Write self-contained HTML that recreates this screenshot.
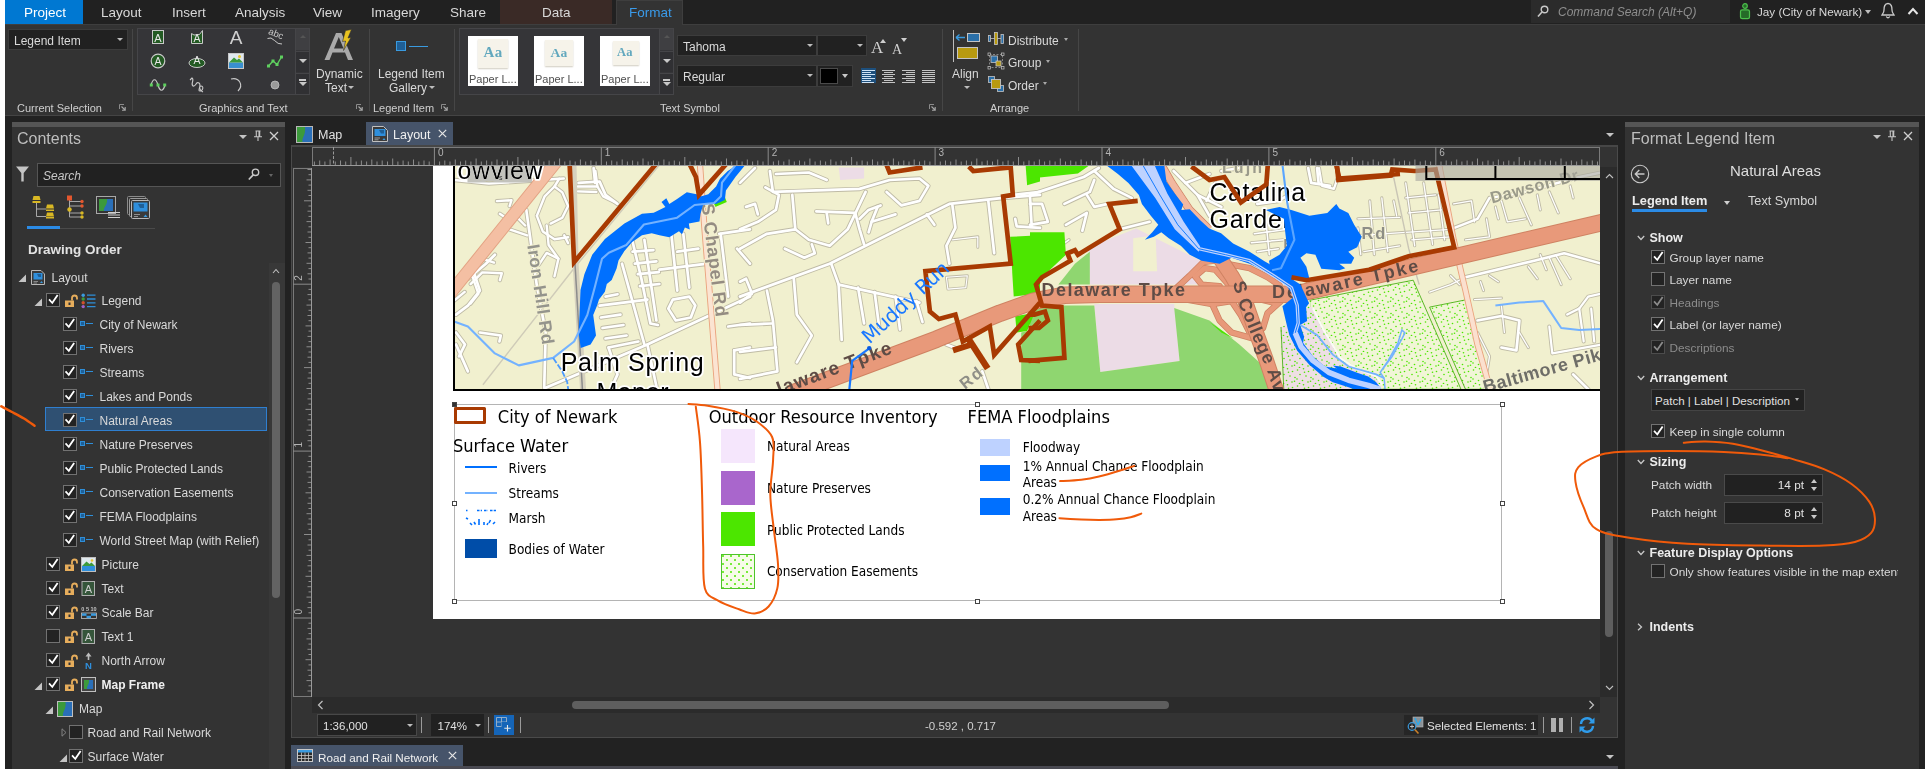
<!DOCTYPE html>
<html lang="en">
<head>
<meta charset="utf-8">
<title>ArcGIS Pro - Layout</title>
<style>
*{box-sizing:border-box;margin:0;padding:0}
html,body{width:1925px;height:769px;overflow:hidden;background:#222222}
body{position:relative;font-family:"Liberation Sans",sans-serif;font-size:12px;color:#d6d6d6;line-height:1}
.a{position:absolute}
.t{position:absolute;white-space:nowrap}
#strip{left:0;top:0;width:5px;height:769px;background:#fff}
/* ---------- tab bar ---------- */
#tabbar{left:5px;top:0;width:1920px;height:24px;background:#212121}
.rt{top:6px;font-size:13.5px;color:#d9d9d9}
/* ---------- ribbon ---------- */
#ribbon{left:5px;top:24px;width:1920px;height:92px;background:#333333;border-top:1px solid #3e3e3e;border-bottom:1px solid #444}
.gl{top:103px;font-size:11px;color:#cfcfcf}
.sep{top:29px;width:1px;height:82px;background:#464646}
.combo{background:#212121;border:1px solid #3c3c3c}
.rtx{margin-top:1px;font-size:12px;color:#d9d9d9}
/* ---------- panels ---------- */
.panel{background:#333333}
.pbar{background:#555;height:5px}
.ptitle{font-size:16px;color:#bebebe}
.row{margin-top:1px;font-size:12px;color:#d9d9d9}
.cb{width:14px;height:14px;margin:-2px 0 0 -1px;background:#232323;border:1px solid #727272}
.cb.on::after{content:"";position:absolute;left:0;top:0;width:12px;height:12px;background:#fff;clip-path:polygon(1.4px 6.6px,2.7px 5.3px,5.1px 7.9px,9.9px 0.9px,11.4px 1.9px,5.4px 10.8px)}
.cb.dis{border-color:#4c4c4c}
.cb.dis.on::after{background:#8a8a8a}
</style>
</head>
<body>
<div id="strip" class="a"></div>
<div id="tabbar" class="a"></div>
<div id="ribbon" class="a"></div>
<div class="a" style="left:5px;top:0;width:78px;height:24px;background:#0078d2"></div>
<div class="a" style="left:500px;top:0;width:112px;height:24px;background:#3a2a26"></div>
<div class="a" style="left:616px;top:0;width:67px;height:25px;background:#333333;border:1px solid #3e3e3e;border-bottom:0"></div>
<div class="t rt" style="left:24px;color:#fff">Project</div>
<div class="t rt" style="left:101px">Layout</div>
<div class="t rt" style="left:172px">Insert</div>
<div class="t rt" style="left:235px">Analysis</div>
<div class="t rt" style="left:313px">View</div>
<div class="t rt" style="left:371px">Imagery</div>
<div class="t rt" style="left:450px">Share</div>
<div class="t rt" style="left:542px">Data</div>
<div class="t rt" style="left:629px;color:#3a9bea">Format</div>
<div class="a" style="left:1531px;top:0;width:199px;height:23px;background:#2b2b2b"></div>
<svg class="a" style="left:1536px;top:4px" width="14" height="14" viewBox="0 0 14 14"><circle cx="8.5" cy="5.5" r="3.3" fill="none" stroke="#c8c8c8" stroke-width="1.4"/><path d="M6 8 L2 12.5" stroke="#c8c8c8" stroke-width="1.6"/></svg>
<div class="t" style="left:1558px;top:6px;font-size:12px;font-style:italic;color:#8e8e8e">Command Search (Alt+Q)</div>
<svg class="a" style="left:1738px;top:2px" width="14" height="18" viewBox="0 0 14 18"><circle cx="7" cy="4" r="2.300" fill="#256b28" stroke="#4cc04c" stroke-width="1.200"/><path d="M2.500 9.500 Q2.500 7.800 4.200 7.800 H9.800 Q11.500 7.800 11.500 9.500 V15 Q11.500 16.700 9.800 16.700 H4.200 Q2.500 16.700 2.500 15 Z" fill="#256b28" stroke="#4cc04c" stroke-width="1.200"/></svg>
<div class="t rt" style="left:1757px;top:6px;font-size:11.700px">Jay (City of Newark)</div>
<div class="a" style="left:1865px;top:10px;border:3px solid transparent;border-top:4px solid #bdbdbd"></div>
<svg class="a" style="left:1880px;top:2px" width="16" height="18" viewBox="0 0 16 18"><path d="M8 1.5 C4.5 1.5 4 5 4 8 C4 11 2.5 12 2 13 H14 C13.500 12 12 11 12 8 C12 5 11.500 1.500 8 1.500 Z" fill="none" stroke="#c8c8c8" stroke-width="1.3"/><path d="M6.300 14.500 Q8 17 9.700 14.500" fill="none" stroke="#c8c8c8" stroke-width="1.3"/></svg>
<svg class="a" style="left:1907px;top:6px" width="12" height="10" viewBox="0 0 12 10"><path d="M1.500 8 L6 3 L10.500 8" fill="none" stroke="#e6e6e6" stroke-width="2"/></svg>
<!--TABS-->
<div class="a combo" style="left:8px;top:29px;width:120px;height:21px"></div>
<div class="t rtx" style="left:14px;top:34px">Legend Item</div>
<div class="a" style="left:117px;top:38px;border:3px solid transparent;border-top:3.5px solid #bdbdbd;border-bottom:0"></div>
<div class="t gl" style="left:17px">Current Selection</div>
<svg class="a" style="left:119px;top:104px" width="7" height="7" viewBox="0 0 7 7"><path d="M0.500 5 V0.500 H5" fill="none" stroke="#8c8c8c" stroke-width="1"/><path d="M2.500 2.500 L6 6 M6.200 3 V6.200 H3" fill="none" stroke="#a8a8a8" stroke-width="1.100"/></svg>
<div class="a sep" style="left:132px"></div>
<div class="a" style="left:137px;top:27.500px;width:173px;height:67.500px;background:#353538;border:1px solid #454548"></div>
<div class="a" style="left:296px;top:29px;width:13px;height:21px;background:#3f3f42"></div>
<div class="a" style="left:296px;top:51px;width:13px;height:21px;background:#303033;border-top:1px solid #454548"></div>
<div class="a" style="left:296px;top:73px;width:13px;height:21px;background:#303033;border-top:1px solid #454548"></div>
<div class="a" style="left:295px;top:29px;width:1px;height:65px;background:#454548"></div>
<div class="a" style="left:300px;top:35px;border:3px solid transparent;border-bottom:3.5px solid #555;border-top:0"></div>
<div class="a" style="left:298.5px;top:59px;border:4px solid transparent;border-top:4.5px solid #c8c8c8;border-bottom:0"></div>
<div class="a" style="left:299px;top:79px;width:7px;height:1.500px;background:#c8c8c8"></div>
<div class="a" style="left:298.5px;top:82px;border:4px solid transparent;border-top:4.5px solid #c8c8c8;border-bottom:0"></div>
<svg class="a" style="left:147.5px;top:27.0px" width="20" height="20" viewBox="0 0 20 20"><rect x="4.500" y="3.500" width="11" height="13" fill="#235a23" stroke="#c9c9c9" stroke-width="1"/><text x="10" y="14.5" font-family="Liberation Sans,sans-serif" font-size="11" font-weight="normal" text-anchor="middle" fill="#e6e6e6">A</text></svg>
<svg class="a" style="left:186.5px;top:27.0px" width="20" height="20" viewBox="0 0 20 20"><path d="M4.500 6.500 L7 8 L12.500 7.500 L15.500 3.500 V16.500 H4.500 Z" fill="#235a23" stroke="#c9c9c9" stroke-width="1"/><text x="10" y="15" font-family="Liberation Sans,sans-serif" font-size="10.5" font-weight="normal" text-anchor="middle" fill="#e6e6e6">A</text></svg>
<svg class="a" style="left:226.0px;top:27.0px" width="20" height="20" viewBox="0 0 20 20"><text x="10" y="17" font-family="Liberation Sans,sans-serif" font-size="19" font-weight="normal" text-anchor="middle" fill="#d0d0d0">A</text></svg>
<svg class="a" style="left:264.5px;top:27.0px" width="20" height="20" viewBox="0 0 20 20"><text x="10.500" y="9.500" font-family="Liberation Sans,sans-serif" font-size="9.500" text-anchor="middle" fill="#c9c9c9" transform="rotate(22 10 8)">abc</text><path d="M2.500 11.500 Q6 9.500 9.500 13.500 T17 17" fill="none" stroke="#c9c9c9" stroke-width="1"/></svg>
<svg class="a" style="left:147.5px;top:51.0px" width="20" height="20" viewBox="0 0 20 20"><circle cx="10" cy="10" r="6.800" fill="#235a23" stroke="#c9c9c9" stroke-width="1.200"/><text x="10" y="14" font-family="Liberation Sans,sans-serif" font-size="10.5" font-weight="normal" text-anchor="middle" fill="#e6e6e6">A</text></svg>
<svg class="a" style="left:186.5px;top:51.0px" width="20" height="20" viewBox="0 0 20 20"><ellipse cx="10" cy="12" rx="8" ry="4.500" fill="#235a23" stroke="#c9c9c9" stroke-width="1"/><text x="10" y="12.5" font-family="Liberation Sans,sans-serif" font-size="10.5" font-weight="normal" text-anchor="middle" fill="#e6e6e6">A</text></svg>
<svg class="a" style="left:226.0px;top:51.0px" width="20" height="20" viewBox="0 0 20 20"><rect x="2.500" y="2.500" width="15" height="15" fill="#3a8fd0" stroke="#c9c9c9" stroke-width="1"/><rect x="3" y="3" width="14" height="8.500" fill="#dfe8ee"/><path d="M3 11.500 L8 6.500 L11 9 L13 7.500 L17 11.500 Z" fill="#3c9a3c"/><circle cx="13.500" cy="5.500" r="1.500" fill="#e8c52a"/></svg>
<svg class="a" style="left:264.5px;top:51.0px" width="20" height="20" viewBox="0 0 20 20"><path d="M3.500 15 L8 10 L12 13.500 L16.500 6" fill="none" stroke="#5fcf5f" stroke-width="1.400"/><g fill="#5fcf5f"><rect x="2" y="13.500" width="3" height="3"/><rect x="6.500" y="8.500" width="3" height="3"/><rect x="10.500" y="12" width="3" height="3"/><rect x="15" y="4.500" width="3" height="3"/></g></svg>
<svg class="a" style="left:147.5px;top:74.5px" width="20" height="20" viewBox="0 0 20 20"><path d="M3 10 C5 3 8 3 10 10 S15 17 17 10" fill="none" stroke="#c9c9c9" stroke-width="1.200"/><g fill="#5fcf5f"><rect x="1.800" y="8.500" width="3" height="3"/><rect x="8.500" y="8.500" width="3" height="3"/><rect x="15.200" y="8.500" width="3" height="3"/></g></svg>
<svg class="a" style="left:186.5px;top:74.5px" width="20" height="20" viewBox="0 0 20 20"><path d="M3 5 L5 3 C8 5 3 9 6 11 C9 12 9 6 12 8 C15 10 10 16 13 16 C16 16 17 11 14 11 C12 11 12 15 16 17" fill="none" stroke="#c9c9c9" stroke-width="1.100"/></svg>
<svg class="a" style="left:226.0px;top:74.5px" width="20" height="20" viewBox="0 0 20 20"><path d="M5 4 C13 2 18 10 12 16" fill="none" stroke="#c9c9c9" stroke-width="1.100"/></svg>
<svg class="a" style="left:264.5px;top:74.5px" width="20" height="20" viewBox="0 0 20 20"><circle cx="10" cy="10" r="4" fill="#9a9a9a" stroke="#c0c0c0" stroke-width="0.800"/></svg>
<div class="t gl" style="left:199px">Graphics and Text</div>
<svg class="a" style="left:356px;top:104px" width="7" height="7" viewBox="0 0 7 7"><path d="M0.500 5 V0.500 H5" fill="none" stroke="#8c8c8c" stroke-width="1"/><path d="M2.500 2.500 L6 6 M6.200 3 V6.200 H3" fill="none" stroke="#a8a8a8" stroke-width="1.100"/></svg>
<svg class="a" style="left:322px;top:29px" width="34" height="34" viewBox="0 0 34 34"><path d="M2.500 31 L14 4 H19.500 L31 31 H26 L23 23.500 H10.500 L7.500 31 Z M12 19.500 H21.500 L16.800 8 Z" fill="#a9a9a9" fill-rule="evenodd"/><path d="M23.500 1.500 L29.500 0.500 L26 9 L29 8.500 L21.500 21.500 L23.500 12 L20.500 12.500 Z" fill="#e9c320" stroke="#333" stroke-width="0.600"/></svg>
<div class="t rtx" style="left:316px;top:67px">Dynamic</div>
<div class="t rtx" style="left:325px;top:81px">Text</div>
<div class="a" style="left:348px;top:86px;border:3px solid transparent;border-top:3.5px solid #bdbdbd;border-bottom:0"></div>
<div class="a sep" style="left:369px"></div>
<div class="a" style="left:396px;top:41px;width:10px;height:10px;background:#1f5f96;border:1.500px solid #3a9be0"></div>
<div class="a" style="left:409px;top:45.500px;width:19px;height:1.500px;background:#3a9be0"></div>
<div class="t rtx" style="left:378px;top:67px">Legend Item</div>
<div class="t rtx" style="left:389px;top:81px">Gallery</div>
<div class="a" style="left:428.5px;top:86px;border:3px solid transparent;border-top:3.5px solid #bdbdbd;border-bottom:0"></div>
<div class="t gl" style="left:373px">Legend Item</div>
<svg class="a" style="left:441px;top:104px" width="7" height="7" viewBox="0 0 7 7"><path d="M0.500 5 V0.500 H5" fill="none" stroke="#8c8c8c" stroke-width="1"/><path d="M2.500 2.500 L6 6 M6.200 3 V6.200 H3" fill="none" stroke="#a8a8a8" stroke-width="1.100"/></svg>
<div class="a sep" style="left:454px"></div>
<div class="a" style="left:459px;top:27.500px;width:215px;height:67.500px;background:#353538;border:1px solid #454548"></div>
<div class="a" style="left:468px;top:36px;width:50px;height:50px;background:#fff"></div>
<div class="a" style="left:478px;top:39px;width:30px;height:29px;background:#f6f3ea;box-shadow:0 1px 1.500px #d0ccc0"></div>
<div class="t" style="left:468px;top:45.0px;width:50px;text-align:center;font-family:'Liberation Serif',serif;font-weight:bold;font-size:15px;letter-spacing:0.300px;color:#62a8be">Aa</div>
<div class="t" style="left:469px;top:74px;font-size:11px;color:#4f4f4f">Paper L...</div>
<div class="a" style="left:534px;top:36px;width:50px;height:50px;background:#fff"></div>
<div class="a" style="left:545px;top:40px;width:28px;height:26px;background:#f6f3ea;box-shadow:0 1px 1.500px #d0ccc0"></div>
<div class="t" style="left:534px;top:45.9px;width:50px;text-align:center;font-family:'Liberation Serif',serif;font-weight:bold;font-size:13.5px;letter-spacing:0.300px;color:#62a8be">Aa</div>
<div class="t" style="left:535px;top:74px;font-size:11px;color:#4f4f4f">Paper L...</div>
<div class="a" style="left:600px;top:36px;width:50px;height:50px;background:#fff"></div>
<div class="a" style="left:612.5px;top:41px;width:26px;height:24px;background:#f6f3ea;box-shadow:0 1px 1.500px #d0ccc0"></div>
<div class="t" style="left:600px;top:46.4px;width:50px;text-align:center;font-family:'Liberation Serif',serif;font-weight:bold;font-size:12.5px;letter-spacing:0.300px;color:#62a8be">Aa</div>
<div class="t" style="left:601px;top:74px;font-size:11px;color:#4f4f4f">Paper L...</div>
<div class="a" style="left:660px;top:29px;width:13px;height:21px;background:#3f3f42"></div>
<div class="a" style="left:660px;top:51px;width:13px;height:21px;background:#303033;border-top:1px solid #454548"></div>
<div class="a" style="left:660px;top:73px;width:13px;height:21px;background:#303033;border-top:1px solid #454548"></div>
<div class="a" style="left:659px;top:29px;width:1px;height:65px;background:#454548"></div>
<div class="a" style="left:664px;top:35px;border:3px solid transparent;border-bottom:3.500px solid #555;border-top:0"></div>
<div class="a" style="left:662.5px;top:59px;border:4px solid transparent;border-top:4.5px solid #c8c8c8;border-bottom:0"></div>
<div class="a" style="left:663px;top:79px;width:7px;height:1.500px;background:#c8c8c8"></div>
<div class="a" style="left:662.5px;top:82px;border:4px solid transparent;border-top:4.5px solid #c8c8c8;border-bottom:0"></div>
<div class="a combo" style="left:677px;top:35px;width:140px;height:21px"></div>
<div class="a combo" style="left:817px;top:35px;width:50px;height:21px"></div>
<div class="a combo" style="left:677px;top:65px;width:140px;height:22px"></div>
<div class="a combo" style="left:817px;top:65px;width:36px;height:22px"></div>
<div class="t rtx" style="left:683px;top:40px">Tahoma</div>
<div class="t rtx" style="left:683px;top:70px">Regular</div>
<div class="a" style="left:806.5px;top:44px;border:3px solid transparent;border-top:3.5px solid #bdbdbd;border-bottom:0"></div>
<div class="a" style="left:856.5px;top:44px;border:3px solid transparent;border-top:3.5px solid #bdbdbd;border-bottom:0"></div>
<div class="a" style="left:806.5px;top:74px;border:3px solid transparent;border-top:3.5px solid #bdbdbd;border-bottom:0"></div>
<div class="a" style="left:820px;top:68px;width:18px;height:16px;background:#000;border:1px solid #4a4a4a"></div>
<div class="a" style="left:842px;top:74px;border:3.5px solid transparent;border-top:4.0px solid #c8c8c8;border-bottom:0"></div>
<div class="t" style="left:871px;top:39px;font-family:'Liberation Serif',serif;font-size:17px;color:#cfcfcf">A</div>
<div class="a" style="left:880px;top:39px;border:3px solid transparent;border-bottom:4px solid #cfcfcf;border-top:0"></div>
<div class="t" style="left:892px;top:43px;font-family:'Liberation Serif',serif;font-size:14px;color:#cfcfcf">A</div>
<div class="a" style="left:900.5px;top:38px;border:3.5px solid transparent;border-top:4.0px solid #cfcfcf;border-bottom:0"></div>
<div class="a" style="left:861px;top:68px;width:15px;height:15px;background:#1d4f7c"></div>
<div class="a" style="left:862px;top:69.5px;width:13px;height:1px;background:#cfe3f5"></div>
<div class="a" style="left:862px;top:71.5px;width:9px;height:1px;background:#cfe3f5"></div>
<div class="a" style="left:862px;top:73.5px;width:13px;height:1px;background:#cfe3f5"></div>
<div class="a" style="left:862px;top:75.5px;width:9px;height:1px;background:#cfe3f5"></div>
<div class="a" style="left:862px;top:77.5px;width:13px;height:1px;background:#cfe3f5"></div>
<div class="a" style="left:862px;top:79.5px;width:9px;height:1px;background:#cfe3f5"></div>
<div class="a" style="left:862px;top:81.5px;width:12px;height:1px;background:#cfe3f5"></div>
<div class="a" style="left:882px;top:69.5px;width:13px;height:1px;background:#c4c4c4"></div>
<div class="a" style="left:884px;top:71.5px;width:9px;height:1px;background:#c4c4c4"></div>
<div class="a" style="left:882px;top:73.5px;width:13px;height:1px;background:#c4c4c4"></div>
<div class="a" style="left:884px;top:75.5px;width:9px;height:1px;background:#c4c4c4"></div>
<div class="a" style="left:882px;top:77.5px;width:13px;height:1px;background:#c4c4c4"></div>
<div class="a" style="left:884px;top:79.5px;width:9px;height:1px;background:#c4c4c4"></div>
<div class="a" style="left:882px;top:81.5px;width:13px;height:1px;background:#c4c4c4"></div>
<div class="a" style="left:902px;top:69.5px;width:13px;height:1px;background:#c4c4c4"></div>
<div class="a" style="left:906px;top:71.5px;width:9px;height:1px;background:#c4c4c4"></div>
<div class="a" style="left:902px;top:73.5px;width:13px;height:1px;background:#c4c4c4"></div>
<div class="a" style="left:906px;top:75.5px;width:9px;height:1px;background:#c4c4c4"></div>
<div class="a" style="left:902px;top:77.5px;width:13px;height:1px;background:#c4c4c4"></div>
<div class="a" style="left:906px;top:79.5px;width:9px;height:1px;background:#c4c4c4"></div>
<div class="a" style="left:902px;top:81.5px;width:13px;height:1px;background:#c4c4c4"></div>
<div class="a" style="left:922px;top:69.5px;width:13px;height:1px;background:#c4c4c4"></div>
<div class="a" style="left:922px;top:71.5px;width:13px;height:1px;background:#c4c4c4"></div>
<div class="a" style="left:922px;top:73.5px;width:13px;height:1px;background:#c4c4c4"></div>
<div class="a" style="left:922px;top:75.5px;width:13px;height:1px;background:#c4c4c4"></div>
<div class="a" style="left:922px;top:77.5px;width:13px;height:1px;background:#c4c4c4"></div>
<div class="a" style="left:922px;top:79.5px;width:13px;height:1px;background:#c4c4c4"></div>
<div class="a" style="left:922px;top:81.5px;width:13px;height:1px;background:#c4c4c4"></div>
<div class="t gl" style="left:660px">Text Symbol</div>
<svg class="a" style="left:929px;top:104px" width="7" height="7" viewBox="0 0 7 7"><path d="M0.500 5 V0.500 H5" fill="none" stroke="#8c8c8c" stroke-width="1"/><path d="M2.500 2.500 L6 6 M6.200 3 V6.200 H3" fill="none" stroke="#a8a8a8" stroke-width="1.100"/></svg>
<div class="a sep" style="left:942px"></div>
<svg class="a" style="left:952px;top:29px" width="30" height="34" viewBox="0 0 30 34"><path d="M1.500 1 V33" stroke="#bdbdbd" stroke-width="1"/><rect x="15.500" y="4.500" width="12" height="8" fill="#2a6fa8" stroke="#c4c4c4"/><path d="M4 8.500 H13 M4 8.500 L7.500 5.500 M4 8.500 L7.500 11.500" stroke="#3a9be0" stroke-width="1.400" fill="none"/><rect x="5.500" y="18.500" width="20" height="11" fill="#b89a10" stroke="#c4c4c4"/></svg>
<div class="t rtx" style="left:952px;top:67px">Align</div>
<div class="a" style="left:963.5px;top:86px;border:3px solid transparent;border-top:3.5px solid #bdbdbd;border-bottom:0"></div>
<svg class="a" style="left:987px;top:31px" width="18" height="16" viewBox="0 0 18 16"><rect x="1.500" y="4.500" width="2" height="6" fill="#2a6fa8" stroke="#c4c4c4" stroke-width="0.800"/><rect x="7.500" y="1.500" width="3" height="12" fill="#b89a10" stroke="#c4c4c4" stroke-width="0.800"/><rect x="14" y="3.500" width="2.500" height="9" fill="#2a6fa8" stroke="#c4c4c4" stroke-width="0.800"/><path d="M3.500 7.500 H7.500 M10.500 7.500 H14" stroke="#c4c4c4" stroke-width="0.800"/></svg>
<svg class="a" style="left:987px;top:52px" width="18" height="18" viewBox="0 0 18 18"><rect x="2.500" y="2.500" width="13" height="13" fill="none" stroke="#9a9a9a" stroke-dasharray="2 1.500" stroke-width="0.800"/><rect x="4" y="4" width="6.500" height="6.500" fill="#2a6fa8" stroke="#c4c4c4" stroke-width="0.800"/><rect x="9" y="9" width="5" height="5" fill="#b89a10" stroke="#c4c4c4" stroke-width="0.800"/><g fill="#333" stroke="#c4c4c4" stroke-width="0.700"><rect x="1" y="1" width="2.500" height="2.500"/><rect x="14.500" y="1" width="2.500" height="2.500"/><rect x="1" y="14.500" width="2.500" height="2.500"/><rect x="14.500" y="14.500" width="2.500" height="2.500"/></g></svg>
<svg class="a" style="left:987px;top:75px" width="18" height="18" viewBox="0 0 18 18"><rect x="1.500" y="1.500" width="6" height="6" fill="#2a6fa8" stroke="#c4c4c4" stroke-width="0.800"/><rect x="10.500" y="10.500" width="6" height="6" fill="#2a6fa8" stroke="#c4c4c4" stroke-width="0.800"/><rect x="4.500" y="4.500" width="9" height="9" fill="#b89a10" stroke="#c4c4c4" stroke-width="0.900"/></svg>
<div class="t rtx" style="left:1008px;top:34px">Distribute</div>
<div class="t rtx" style="left:1008px;top:56px">Group</div>
<div class="t rtx" style="left:1008px;top:79px">Order</div>
<div class="a" style="left:1064px;top:37.5px;border:2.5px solid transparent;border-top:3.0px solid #a8a8a8;border-bottom:0"></div>
<div class="a" style="left:1046px;top:59.5px;border:2.5px solid transparent;border-top:3.0px solid #a8a8a8;border-bottom:0"></div>
<div class="a" style="left:1043px;top:82px;border:2.5px solid transparent;border-top:3.0px solid #a8a8a8;border-bottom:0"></div>
<div class="t gl" style="left:990px">Arrange</div>
<div class="a sep" style="left:1078px"></div>
<!--RIBBON-->
<div class="a panel" style="left:11.500px;top:122px;width:273.500px;height:647px"></div>
<div class="a pbar" style="left:11.500px;top:122px;width:273.500px"></div>
<div class="t ptitle" style="left:17px;top:130.500px">Contents</div>
<div class="a" style="left:239px;top:135px;border:4px solid transparent;border-top:4.500px solid #c4c4c4;border-bottom:0"></div>
<svg class="a" style="left:253px;top:130px" width="10" height="12" viewBox="0 0 10 12"><path d="M2.500 1 H7.500 M3.300 1 V6.500 M6.700 1 V6.500 M6 1 V6.500 M1 6.700 H9 M5 7 V11" stroke="#c4c4c4" stroke-width="1.100" fill="none"/></svg>
<svg class="a" style="left:269px;top:131px" width="10" height="10" viewBox="0 0 10 10"><path d="M1 1 L9 9 M9 1 L1 9" stroke="#d0d0d0" stroke-width="1.300"/></svg>
<svg class="a" style="left:15px;top:165px" width="15" height="18" viewBox="0 0 15 18"><path d="M1 1.500 H14 L8.700 8 V16.500 H6.300 V8 Z" fill="#c4c4c4"/></svg>
<div class="a" style="left:37px;top:163px;width:244px;height:24px;background:#212121;border:1px solid #555"></div>
<div class="t" style="left:43px;top:170px;font-size:12px;font-style:italic;color:#c8c8c8">Search</div>
<svg class="a" style="left:247px;top:167px" width="14" height="14" viewBox="0 0 14 14"><circle cx="8.500" cy="5.300" r="3.200" fill="none" stroke="#c8c8c8" stroke-width="1.400"/><path d="M6.200 7.800 L1.800 12.500" stroke="#c8c8c8" stroke-width="1.700"/></svg>
<div class="a" style="left:269px;top:174px;border:2.500px solid transparent;border-top:3px solid #666;border-bottom:0"></div>
<svg class="a" style="left:31px;top:195px" width="25" height="25" viewBox="0 0 25 25"><path d="M5.500 7 V21.500 H15 M5.500 14 H15" fill="none" stroke="#a8a8a8" stroke-width="1"/><g fill="#d9b824"><path d="M2.500 1 H8.500 L9.500 5 H1.500 Z"/><rect x="1.500" y="6" width="8" height="2"/><path d="M16 9.500 H22 L23 13.500 H15 Z"/><rect x="15" y="14.500" width="8" height="1.500"/><path d="M16 17.500 H22 L23 21.500 H15 Z"/><rect x="15" y="22" width="8" height="1.500"/></g></svg>
<svg class="a" style="left:66px;top:195px" width="20" height="25" viewBox="0 0 20 25"><path d="M3.500 5 V22 M3.500 6.500 H15 M3.500 11 H15 M3.500 18 H15 M3.500 22 H15" fill="none" stroke="#a8a8a8" stroke-width="1"/><rect x="1" y="0.500" width="5" height="5" fill="#e4572e"/><circle cx="16" cy="6.500" r="1.700" fill="#e4572e"/><circle cx="16" cy="11" r="1.700" fill="#e4572e"/><circle cx="3.500" cy="14.500" r="2.200" fill="#d9b824"/><circle cx="16" cy="18" r="1.700" fill="#d9b824"/><circle cx="16" cy="22" r="1.700" fill="#d9b824"/></svg>
<svg class="a" style="left:95px;top:195px" width="26" height="25" viewBox="0 0 26 25"><rect x="1.500" y="1.500" width="19" height="17" fill="#333" stroke="#a8a8a8" stroke-width="1"/><rect x="4" y="4" width="14" height="12" fill="#3c9a3c"/><path d="M12 4 H18 V16 H9 C8 12 13 10 12 4 Z" fill="#2a6fb8"/><path d="M13 17.500 H25 M13 20 H25 M13 22.500 H25" stroke="#cfcfcf" stroke-width="1.200"/></svg>
<svg class="a" style="left:126px;top:195px" width="26" height="26" viewBox="0 0 26 26"><rect x="1.500" y="1.500" width="18" height="18" rx="1" fill="#333" stroke="#8a8a8a"/><rect x="3.500" y="3.500" width="18" height="18" rx="1" fill="#333" stroke="#9a9a9a"/><rect x="5.500" y="5.500" width="18" height="18" rx="1" fill="#3a3a3a" stroke="#b8b8b8"/><rect x="7.500" y="7.500" width="14" height="9" fill="#2f8fdc"/><path d="M12 9 H18 V13 H14 Z" fill="#1f5f96"/><path d="M8 19.500 H14 M8 21.500 H12" stroke="#9a9a9a" stroke-width="0.900"/><path d="M17.500 22 L19.500 19.500 L21.500 22 Z" fill="#3a9be0"/></svg>
<div class="a" style="left:27px;top:228px;width:128px;height:1px;background:#4a4a4a"></div>
<div class="a" style="left:27px;top:226px;width:33px;height:3px;background:#2b8be6"></div>
<div class="t" style="left:28px;top:243px;font-size:13.500px;font-weight:bold;color:#e2e2e2">Drawing Order</div>
<div class="a" style="left:268.500px;top:263px;width:16px;height:506px;background:#383838"></div>
<svg class="a" style="left:272px;top:268px" width="8" height="6" viewBox="0 0 8 6"><path d="M1 5 L4 1.500 L7 5" fill="none" stroke="#c0c0c0" stroke-width="1.100"/></svg>
<div class="a" style="left:271.500px;top:281.500px;width:8.500px;height:316px;background:#636363;border-radius:4.500px"></div>
<svg class="a" style="left:18px;top:274px" width="9" height="9" viewBox="0 0 9 9"><path d="M8 0.500 V8 H0.500 Z" fill="#c4c4c4"/></svg>
<svg class="a" style="left:30px;top:268.5px" width="16" height="17" viewBox="0 0 16 17"><path d="M1.500 1.500 H11 L14.500 5 V15.500 H1.500 Z" fill="#3a3a3a" stroke="#b8b8b8"/><rect x="3.500" y="4" width="9" height="6.500" fill="#2f8fdc"/><path d="M7 5 H11 V8 H8.500 Z" fill="#1f5f96"/><path d="M3.500 12.500 H8 M3.500 14 H7" stroke="#9a9a9a" stroke-width="0.800"/><path d="M10 14 L11.500 12 L13 14 Z" fill="#3a9be0"/></svg>
<div class="t row" style="left:51.5px;top:270.5px">Layout</div>
<svg class="a" style="left:34px;top:297.5px" width="9" height="9" viewBox="0 0 9 9"><path d="M8 0.500 V8 H0.500 Z" fill="#c4c4c4"/></svg>
<div class="a cb on" style="left:47px;top:294.5px"></div>
<svg class="a" style="left:64px;top:293.5px" width="14" height="14" viewBox="0 0 14 14"><path d="M8 6.500 V4 Q8 1.500 10.500 1.500 Q13 1.500 13 4 V5.500" fill="none" stroke="#e6ad5c" stroke-width="1.800"/><rect x="1" y="6.500" width="9" height="6.500" fill="#e6ad5c"/><rect x="4.500" y="8.500" width="2" height="2.500" fill="#333"/></svg>
<svg class="a" style="left:81px;top:292.500px" width="15" height="16" viewBox="0 0 15 16"><circle cx="2.200" cy="2.200" r="1.700" fill="#3a9be0"/><circle cx="2.200" cy="6" r="1.700" fill="#3c9a3c"/><circle cx="2.200" cy="9.800" r="1.700" fill="#d2502a"/><circle cx="2.200" cy="13.600" r="1.700" fill="#a060c8"/><path d="M6 2.200 H14.500 M6 6 H14.500 M6 9.800 H14.500 M6 13.600 H14.500" stroke="#2e8ed8" stroke-width="1.300"/></svg>
<div class="t row" style="left:101.5px;top:294.0px">Legend</div>
<div class="a" style="left:45px;top:407px;width:222px;height:24px;background:#2f5072;border:1px solid #2f7fd0"></div>
<div class="a cb on" style="left:63.5px;top:318.5px"></div>
<div class="a" style="left:80px;top:320.5px;width:5px;height:5px;background:#1f5f96;border:1px solid #2e8ed8"></div><div class="a" style="left:85.5px;top:322.5px;width:7.500px;height:1.500px;background:#2e8ed8"></div>
<div class="t row" style="left:99.5px;top:318.0px">City of Newark</div>
<div class="a cb on" style="left:63.5px;top:342.5px"></div>
<div class="a" style="left:80px;top:344.5px;width:5px;height:5px;background:#1f5f96;border:1px solid #2e8ed8"></div><div class="a" style="left:85.5px;top:346.5px;width:7.500px;height:1.500px;background:#2e8ed8"></div>
<div class="t row" style="left:99.5px;top:342.0px">Rivers</div>
<div class="a cb on" style="left:63.5px;top:366.5px"></div>
<div class="a" style="left:80px;top:368.5px;width:5px;height:5px;background:#1f5f96;border:1px solid #2e8ed8"></div><div class="a" style="left:85.5px;top:370.5px;width:7.500px;height:1.500px;background:#2e8ed8"></div>
<div class="t row" style="left:99.5px;top:366.0px">Streams</div>
<div class="a cb on" style="left:63.5px;top:390.5px"></div>
<div class="a" style="left:80px;top:392.5px;width:5px;height:5px;background:#1f5f96;border:1px solid #2e8ed8"></div><div class="a" style="left:85.5px;top:394.5px;width:7.500px;height:1.500px;background:#2e8ed8"></div>
<div class="t row" style="left:99.5px;top:390.0px">Lakes and Ponds</div>
<div class="a cb on" style="left:63.5px;top:414.5px"></div>
<div class="a" style="left:80px;top:416.5px;width:5px;height:5px;background:#1f5f96;border:1px solid #2e8ed8"></div><div class="a" style="left:85.5px;top:418.5px;width:7.500px;height:1.500px;background:#2e8ed8"></div>
<div class="t row" style="left:99.5px;top:414.0px">Natural Areas</div>
<div class="a cb on" style="left:63.5px;top:438.5px"></div>
<div class="a" style="left:80px;top:440.5px;width:5px;height:5px;background:#1f5f96;border:1px solid #2e8ed8"></div><div class="a" style="left:85.5px;top:442.5px;width:7.500px;height:1.500px;background:#2e8ed8"></div>
<div class="t row" style="left:99.5px;top:438.0px">Nature Preserves</div>
<div class="a cb on" style="left:63.5px;top:462.5px"></div>
<div class="a" style="left:80px;top:464.5px;width:5px;height:5px;background:#1f5f96;border:1px solid #2e8ed8"></div><div class="a" style="left:85.5px;top:466.5px;width:7.500px;height:1.500px;background:#2e8ed8"></div>
<div class="t row" style="left:99.5px;top:462.0px">Public Protected Lands</div>
<div class="a cb on" style="left:63.5px;top:486.5px"></div>
<div class="a" style="left:80px;top:488.5px;width:5px;height:5px;background:#1f5f96;border:1px solid #2e8ed8"></div><div class="a" style="left:85.5px;top:490.5px;width:7.500px;height:1.500px;background:#2e8ed8"></div>
<div class="t row" style="left:99.5px;top:486.0px">Conservation Easements</div>
<div class="a cb on" style="left:63.5px;top:510.5px"></div>
<div class="a" style="left:80px;top:512.5px;width:5px;height:5px;background:#1f5f96;border:1px solid #2e8ed8"></div><div class="a" style="left:85.5px;top:514.5px;width:7.500px;height:1.500px;background:#2e8ed8"></div>
<div class="t row" style="left:99.5px;top:510.0px">FEMA Floodplains</div>
<div class="a cb on" style="left:63.5px;top:534.5px"></div>
<div class="a" style="left:80px;top:536.5px;width:5px;height:5px;background:#1f5f96;border:1px solid #2e8ed8"></div><div class="a" style="left:85.5px;top:538.5px;width:7.500px;height:1.500px;background:#2e8ed8"></div>
<div class="t row" style="left:99.5px;top:534.0px">World Street Map (with Relief)</div>
<div class="a cb on" style="left:47px;top:558.5px"></div>
<svg class="a" style="left:64px;top:557.5px" width="14" height="14" viewBox="0 0 14 14"><path d="M8 6.500 V4 Q8 1.500 10.500 1.500 Q13 1.500 13 4 V5.500" fill="none" stroke="#e6ad5c" stroke-width="1.800"/><rect x="1" y="6.500" width="9" height="6.500" fill="#e6ad5c"/><rect x="4.500" y="8.500" width="2" height="2.500" fill="#333"/></svg>
<svg class="a" style="left:81px;top:557.0px" width="15" height="15" viewBox="0 0 15 15"><rect x="0.500" y="0.500" width="14" height="14" fill="#dfe8ee" stroke="#c0c0c0"/><rect x="1" y="9" width="13" height="5" fill="#2f8fdc"/><path d="M1 9 L5.500 4.500 L8.500 7 L10.500 5.500 L14 9 Z" fill="#3c9a3c"/><circle cx="11" cy="3.500" r="1.300" fill="#e8c52a"/></svg>
<div class="t row" style="left:101.5px;top:558.0px">Picture</div>
<div class="a cb on" style="left:47px;top:582.5px"></div>
<svg class="a" style="left:64px;top:581.5px" width="14" height="14" viewBox="0 0 14 14"><path d="M8 6.500 V4 Q8 1.500 10.500 1.500 Q13 1.500 13 4 V5.500" fill="none" stroke="#e6ad5c" stroke-width="1.800"/><rect x="1" y="6.500" width="9" height="6.500" fill="#e6ad5c"/><rect x="4.500" y="8.500" width="2" height="2.500" fill="#333"/></svg>
<svg class="a" style="left:81px;top:581.0px" width="15" height="15" viewBox="0 0 15 15"><rect x="1" y="0.500" width="12.500" height="14" fill="#35553a" stroke="#b0b0b0"/><text x="7.300" y="11.500" font-family="Liberation Sans,sans-serif" font-size="11" text-anchor="middle" fill="#cfcfcf">A</text></svg>
<div class="t row" style="left:101.5px;top:582.0px">Text</div>
<div class="a cb on" style="left:47px;top:606.5px"></div>
<svg class="a" style="left:64px;top:605.5px" width="14" height="14" viewBox="0 0 14 14"><path d="M8 6.500 V4 Q8 1.500 10.500 1.500 Q13 1.500 13 4 V5.500" fill="none" stroke="#e6ad5c" stroke-width="1.800"/><rect x="1" y="6.500" width="9" height="6.500" fill="#e6ad5c"/><rect x="4.500" y="8.500" width="2" height="2.500" fill="#333"/></svg>
<svg class="a" style="left:81px;top:605.0px" width="16" height="15" viewBox="0 0 16 15"><text x="8" y="6" font-family="Liberation Sans,sans-serif" font-size="5.500" font-weight="bold" text-anchor="middle" fill="#c8c8c8">0 5 10</text><rect x="0.500" y="8" width="15" height="5.500" fill="#333" stroke="#c0c0c0" stroke-width="0.800"/><rect x="1" y="8.400" width="4.500" height="2.400" fill="#3a9be0"/><rect x="10" y="8.400" width="5" height="2.400" fill="#3a9be0"/><rect x="5.500" y="10.800" width="4.500" height="2.400" fill="#3a9be0"/></svg>
<div class="t row" style="left:101.5px;top:606.0px">Scale Bar</div>
<div class="a cb" style="left:47px;top:630.5px"></div>
<svg class="a" style="left:64px;top:629.5px" width="14" height="14" viewBox="0 0 14 14"><path d="M8 6.500 V4 Q8 1.500 10.500 1.500 Q13 1.500 13 4 V5.500" fill="none" stroke="#e6ad5c" stroke-width="1.800"/><rect x="1" y="6.500" width="9" height="6.500" fill="#e6ad5c"/><rect x="4.500" y="8.500" width="2" height="2.500" fill="#333"/></svg>
<svg class="a" style="left:81px;top:629.0px" width="15" height="15" viewBox="0 0 15 15"><rect x="1" y="0.500" width="12.500" height="14" fill="#35553a" stroke="#b0b0b0"/><text x="7.300" y="11.500" font-family="Liberation Sans,sans-serif" font-size="11" text-anchor="middle" fill="#cfcfcf">A</text></svg>
<div class="t row" style="left:101.5px;top:630.0px">Text 1</div>
<div class="a cb on" style="left:47px;top:654.5px"></div>
<svg class="a" style="left:64px;top:653.5px" width="14" height="14" viewBox="0 0 14 14"><path d="M8 6.500 V4 Q8 1.500 10.500 1.500 Q13 1.500 13 4 V5.500" fill="none" stroke="#e6ad5c" stroke-width="1.800"/><rect x="1" y="6.500" width="9" height="6.500" fill="#e6ad5c"/><rect x="4.500" y="8.500" width="2" height="2.500" fill="#333"/></svg>
<svg class="a" style="left:81px;top:652.0px" width="15" height="17" viewBox="0 0 15 17"><path d="M7.500 0.500 L10.500 4.500 H8.300 V8 H6.700 V4.500 H4.500 Z" fill="#bdbdbd"/><text x="7.500" y="16.500" font-family="Liberation Sans,sans-serif" font-size="9.500" font-weight="bold" text-anchor="middle" fill="#2f8fdc">N</text></svg>
<div class="t row" style="left:101.5px;top:654.0px">North Arrow</div>
<svg class="a" style="left:34px;top:681.5px" width="9" height="9" viewBox="0 0 9 9"><path d="M8 0.500 V8 H0.500 Z" fill="#c4c4c4"/></svg>
<div class="a cb on" style="left:47px;top:678.5px"></div>
<svg class="a" style="left:64px;top:677.5px" width="14" height="14" viewBox="0 0 14 14"><path d="M8 6.500 V4 Q8 1.500 10.500 1.500 Q13 1.500 13 4 V5.500" fill="none" stroke="#e6ad5c" stroke-width="1.800"/><rect x="1" y="6.500" width="9" height="6.500" fill="#e6ad5c"/><rect x="4.500" y="8.500" width="2" height="2.500" fill="#333"/></svg>
<svg class="a" style="left:81px;top:677.0px" width="15" height="15" viewBox="0 0 15 15"><rect x="0.500" y="0.500" width="14" height="14" fill="#444" stroke="#c0c0c0"/><rect x="3" y="3" width="9" height="9" fill="#3c9a3c"/><path d="M8 3 H12 V12 H6 C5.500 9 8.500 7.500 8 3 Z" fill="#2a6fb8"/></svg>
<div class="t row" style="left:101.5px;top:678.0px;font-weight:bold;color:#f0f0f0">Map Frame</div>
<svg class="a" style="left:45px;top:705.5px" width="9" height="9" viewBox="0 0 9 9"><path d="M8 0.500 V8 H0.500 Z" fill="#c4c4c4"/></svg>
<svg class="a" style="left:56.5px;top:701.0px" width="16" height="16" viewBox="0 0 16 16"><rect x="0.500" y="0.500" width="15" height="15" fill="#3c9a3c" stroke="#c0c0c0"/><path d="M8.500 1 H15 V15 H6 C5 11 9.500 8.500 8.500 1 Z" fill="#2a6fb8"/></svg>
<div class="t row" style="left:79px;top:702.0px">Map</div>
<svg class="a" style="left:61px;top:728.0px" width="6" height="9" viewBox="0 0 6 9"><path d="M1 0.800 L5 4.500 L1 8.200 Z" fill="none" stroke="#8a8a8a" stroke-width="0.900"/></svg>
<div class="a cb" style="left:70px;top:726.5px"></div>
<div class="t row" style="left:87.5px;top:726.0px">Road and Rail Network</div>
<svg class="a" style="left:59px;top:753.5px" width="9" height="9" viewBox="0 0 9 9"><path d="M8 0.500 V8 H0.500 Z" fill="#c4c4c4"/></svg>
<div class="a cb on" style="left:70px;top:750.5px"></div>
<div class="t row" style="left:87.5px;top:750.0px">Surface Water</div>
<!--LEFT-->
<div class="a" style="left:366px;top:122px;width:87px;height:23px;background:#46546a"></div>
<svg class="a" style="left:296px;top:126px" width="17" height="17" viewBox="0 0 17 17"><rect x="0.500" y="0.500" width="16" height="16" fill="#3c9a3c" stroke="#b8b8b8"/><path d="M9 1 H16 V16 H6.500 C5.500 12 10 9 9 1 Z" fill="#2a6fb8"/></svg>
<div class="t" style="left:318px;top:129px;font-size:12.500px;color:#e0e0e0">Map</div>
<svg class="a" style="left:371px;top:125px" width="18" height="18" viewBox="0 0 18 18"><path d="M1.500 1.500 H12.500 L16.500 5.500 V16.500 H1.500 Z" fill="#3a3a3a" stroke="#c0c0c0"/><rect x="3.500" y="4" width="11" height="7" fill="#2f8fdc"/><path d="M8 5 H13 V8.500 H10 Z" fill="#1f5f96"/><path d="M3.500 13 H9 M3.500 14.800 H7.500" stroke="#a8a8a8" stroke-width="0.900"/><path d="M11.500 15 L13 13 L14.500 15 Z" fill="#3a9be0"/></svg>
<div class="t" style="left:393px;top:129px;font-size:12.500px;color:#f0f0f0">Layout</div>
<svg class="a" style="left:438px;top:129px" width="9" height="9" viewBox="0 0 9 9"><path d="M0.800 0.800 L8.200 8.200 M8.200 0.800 L0.800 8.200" stroke="#e6e6e6" stroke-width="1.200"/></svg>
<div class="a" style="left:1606px;top:133px;border:4px solid transparent;border-top:4.500px solid #c4c4c4;border-bottom:0"></div>
<div class="a" style="left:291px;top:145px;width:1327px;height:593px;background:#333;border:1px solid #4a4a4a;border-top:2px solid #464646"></div>
<div class="a" style="left:292px;top:147px;width:20px;height:19.500px;background:#2d2d2d"></div>
<svg class="a" style="left:312px;top:147px" width="1288" height="19" viewBox="0 0 1288 19"><rect x="0.500" y="0.500" width="1287" height="18" fill="#333" stroke="#7a7a7a"/><path d="M2.4 18V14.5M7.7 18V13.5M12.9 18V14.5M18.1 18V12.5M23.3 18V14.5M28.5 18V13.5M33.7 18V14.5M38.9 18V10M44.2 18V14.5M49.4 18V13.5M54.6 18V14.5M59.8 18V12.5M65.0 18V14.5M70.2 18V13.5M75.5 18V14.5M80.7 18V11.5M85.9 18V14.5M91.1 18V13.5M96.3 18V14.5M101.5 18V12.5M106.8 18V14.5M112.0 18V13.5M117.2 18V14.5M122.4 18V0M127.6 18V14.5M132.8 18V13.5M138.0 18V14.5M143.3 18V12.5M148.5 18V14.5M153.7 18V13.5M158.9 18V14.5M164.1 18V11.5M169.3 18V14.5M174.6 18V13.5M179.8 18V14.5M185.0 18V12.5M190.2 18V14.5M195.4 18V13.5M200.6 18V14.5M205.9 18V10M211.1 18V14.5M216.3 18V13.5M221.5 18V14.5M226.7 18V12.5M231.9 18V14.5M237.1 18V13.5M242.4 18V14.5M247.6 18V11.5M252.8 18V14.5M258.0 18V13.5M263.2 18V14.5M268.4 18V12.5M273.7 18V14.5M278.9 18V13.5M284.1 18V14.5M289.3 18V0M294.5 18V14.5M299.7 18V13.5M304.9 18V14.5M310.2 18V12.5M315.4 18V14.5M320.6 18V13.5M325.8 18V14.5M331.0 18V11.5M336.2 18V14.5M341.5 18V13.5M346.7 18V14.5M351.9 18V12.5M357.1 18V14.5M362.3 18V13.5M367.5 18V14.5M372.8 18V10M378.0 18V14.5M383.2 18V13.5M388.4 18V14.5M393.6 18V12.5M398.8 18V14.5M404.0 18V13.5M409.3 18V14.5M414.5 18V11.5M419.7 18V14.5M424.9 18V13.5M430.1 18V14.5M435.3 18V12.5M440.6 18V14.5M445.8 18V13.5M451.0 18V14.5M456.2 18V0M461.4 18V14.5M466.6 18V13.5M471.8 18V14.5M477.1 18V12.5M482.3 18V14.5M487.5 18V13.5M492.7 18V14.5M497.9 18V11.5M503.1 18V14.5M508.4 18V13.5M513.6 18V14.5M518.8 18V12.5M524.0 18V14.5M529.2 18V13.5M534.4 18V14.5M539.6 18V10M544.9 18V14.5M550.1 18V13.5M555.3 18V14.5M560.5 18V12.5M565.7 18V14.5M570.9 18V13.5M576.2 18V14.5M581.4 18V11.5M586.6 18V14.5M591.8 18V13.5M597.0 18V14.5M602.2 18V12.5M607.5 18V14.5M612.7 18V13.5M617.9 18V14.5M623.1 18V0M628.3 18V14.5M633.5 18V13.5M638.7 18V14.5M644.0 18V12.5M649.2 18V14.5M654.4 18V13.5M659.6 18V14.5M664.8 18V11.5M670.0 18V14.5M675.3 18V13.5M680.5 18V14.5M685.7 18V12.5M690.9 18V14.5M696.1 18V13.5M701.3 18V14.5M706.5 18V10M711.8 18V14.5M717.0 18V13.5M722.2 18V14.5M727.4 18V12.5M732.6 18V14.5M737.8 18V13.5M743.1 18V14.5M748.3 18V11.5M753.5 18V14.5M758.7 18V13.5M763.9 18V14.5M769.1 18V12.5M774.4 18V14.5M779.6 18V13.5M784.8 18V14.5M790.0 18V0M795.2 18V14.5M800.4 18V13.5M805.6 18V14.5M810.9 18V12.5M816.1 18V14.5M821.3 18V13.5M826.5 18V14.5M831.7 18V11.5M836.9 18V14.5M842.2 18V13.5M847.4 18V14.5M852.6 18V12.5M857.8 18V14.5M863.0 18V13.5M868.2 18V14.5M873.5 18V10M878.7 18V14.5M883.9 18V13.5M889.1 18V14.5M894.3 18V12.5M899.5 18V14.5M904.7 18V13.5M910.0 18V14.5M915.2 18V11.5M920.4 18V14.5M925.6 18V13.5M930.8 18V14.5M936.0 18V12.5M941.3 18V14.5M946.5 18V13.5M951.7 18V14.5M956.9 18V0M962.1 18V14.5M967.3 18V13.5M972.5 18V14.5M977.8 18V12.5M983.0 18V14.5M988.2 18V13.5M993.4 18V14.5M998.6 18V11.5M1003.8 18V14.5M1009.1 18V13.5M1014.3 18V14.5M1019.5 18V12.5M1024.7 18V14.5M1029.9 18V13.5M1035.1 18V14.5M1040.3 18V10M1045.6 18V14.5M1050.8 18V13.5M1056.0 18V14.5M1061.2 18V12.5M1066.4 18V14.5M1071.6 18V13.5M1076.9 18V14.5M1082.1 18V11.5M1087.3 18V14.5M1092.5 18V13.5M1097.7 18V14.5M1102.9 18V12.5M1108.2 18V14.5M1113.4 18V13.5M1118.6 18V14.5M1123.8 18V0M1129.0 18V14.5M1134.2 18V13.5M1139.4 18V14.5M1144.7 18V12.5M1149.9 18V14.5M1155.1 18V13.5M1160.3 18V14.5M1165.5 18V11.5M1170.7 18V14.5M1176.0 18V13.5M1181.2 18V14.5M1186.4 18V12.5M1191.6 18V14.5M1196.8 18V13.5M1202.0 18V14.5M1207.2 18V10M1212.5 18V14.5M1217.7 18V13.5M1222.9 18V14.5M1228.1 18V12.5M1233.3 18V14.5M1238.5 18V13.5M1243.8 18V14.5M1249.0 18V11.5M1254.2 18V14.5M1259.4 18V13.5M1264.6 18V14.5M1269.8 18V12.5M1275.1 18V14.5M1280.3 18V13.5M1285.5 18V14.5" stroke="#8c8c8c" stroke-width="1" fill="none"/><path d="M21.500 0 V18" stroke="#9a9a9a" stroke-dasharray="3 1.500"/><text x="125.9" y="8.500" font-size="10" fill="#b4b4b4" font-family="Liberation Sans,sans-serif">0</text><text x="292.8" y="8.500" font-size="10" fill="#b4b4b4" font-family="Liberation Sans,sans-serif">1</text><text x="459.7" y="8.500" font-size="10" fill="#b4b4b4" font-family="Liberation Sans,sans-serif">2</text><text x="626.6" y="8.500" font-size="10" fill="#b4b4b4" font-family="Liberation Sans,sans-serif">3</text><text x="793.5" y="8.500" font-size="10" fill="#b4b4b4" font-family="Liberation Sans,sans-serif">4</text><text x="960.4" y="8.500" font-size="10" fill="#b4b4b4" font-family="Liberation Sans,sans-serif">5</text><text x="1127.3" y="8.500" font-size="10" fill="#b4b4b4" font-family="Liberation Sans,sans-serif">6</text><path d="M0 18.500 H1288" stroke="#9a9a9a"/></svg>
<svg class="a" style="left:293px;top:168px" width="19" height="529" viewBox="0 0 19 529"><rect x="0.500" y="0.500" width="18" height="528" fill="#333" stroke="#7a7a7a"/><path d="M19 523.0H14.5M19 517.8H15.5M19 512.6H13.5M19 507.4H15.5M19 502.2H14.5M19 496.9H15.5M19 491.7H12.5M19 486.5H15.5M19 481.3H14.5M19 476.1H15.5M19 470.9H13.5M19 465.6H15.5M19 460.4H14.5M19 455.2H15.5M19 450.0H0M19 444.8H15.5M19 439.6H14.5M19 434.4H15.5M19 429.1H13.5M19 423.9H15.5M19 418.7H14.5M19 413.5H15.5M19 408.3H12.5M19 403.1H15.5M19 397.8H14.5M19 392.6H15.5M19 387.4H13.5M19 382.2H15.5M19 377.0H14.5M19 371.8H15.5M19 366.5H11M19 361.3H15.5M19 356.1H14.5M19 350.9H15.5M19 345.7H13.5M19 340.5H15.5M19 335.3H14.5M19 330.0H15.5M19 324.8H12.5M19 319.6H15.5M19 314.4H14.5M19 309.2H15.5M19 304.0H13.5M19 298.7H15.5M19 293.5H14.5M19 288.3H15.5M19 283.1H0M19 277.9H15.5M19 272.7H14.5M19 267.5H15.5M19 262.2H13.5M19 257.0H15.5M19 251.8H14.5M19 246.6H15.5M19 241.4H12.5M19 236.2H15.5M19 230.9H14.5M19 225.7H15.5M19 220.5H13.5M19 215.3H15.5M19 210.1H14.5M19 204.9H15.5M19 199.6H11M19 194.4H15.5M19 189.2H14.5M19 184.0H15.5M19 178.8H13.5M19 173.6H15.5M19 168.4H14.5M19 163.1H15.5M19 157.9H12.5M19 152.7H15.5M19 147.5H14.5M19 142.3H15.5M19 137.1H13.5M19 131.8H15.5M19 126.6H14.5M19 121.4H15.5M19 116.2H0M19 111.0H15.5M19 105.8H14.5M19 100.6H15.5M19 95.3H13.5M19 90.1H15.5M19 84.9H14.5M19 79.7H15.5M19 74.5H12.5M19 69.3H15.5M19 64.0H14.5M19 58.8H15.5M19 53.6H13.5M19 48.4H15.5M19 43.2H14.5M19 38.0H15.5M19 32.8H11M19 27.5H15.5M19 22.3H14.5M19 17.1H15.5M19 11.9H13.5M19 6.7H15.5M19 1.5H14.5" stroke="#8c8c8c" stroke-width="1" fill="none"/><text transform="translate(9 446.5) rotate(-90)" font-size="10" fill="#b4b4b4" font-family="Liberation Sans,sans-serif">0</text><text transform="translate(9 279.6) rotate(-90)" font-size="10" fill="#b4b4b4" font-family="Liberation Sans,sans-serif">1</text><text transform="translate(9 112.7) rotate(-90)" font-size="10" fill="#b4b4b4" font-family="Liberation Sans,sans-serif">2</text><path d="M18.500 0 V529" stroke="#9a9a9a"/></svg>
<div class="a" style="left:433px;top:166px;width:1167px;height:452.500px;background:#fff"></div>
<svg class="a" style="left:453px;top:166px" width="1147" height="225" viewBox="453 166 1147 225">
<defs><pattern id="dots" width="16" height="16" patternUnits="userSpaceOnUse"><rect width="16" height="16" fill="#f1f5d6"/><circle cx="1.5" cy="2" r="0.800" fill="#4ce600"/><circle cx="7.5" cy="0.8" r="0.800" fill="#4ce600"/><circle cx="12.5" cy="3.5" r="0.800" fill="#4ce600"/><circle cx="4" cy="6.5" r="0.800" fill="#4ce600"/><circle cx="10" cy="8" r="0.800" fill="#4ce600"/><circle cx="15" cy="9.5" r="0.800" fill="#4ce600"/><circle cx="1" cy="11" r="0.800" fill="#4ce600"/><circle cx="6.5" cy="12.5" r="0.800" fill="#4ce600"/><circle cx="12" cy="14" r="0.800" fill="#4ce600"/><circle cx="3.5" cy="15.5" r="0.800" fill="#4ce600"/><circle cx="8.5" cy="4.2" r="0.800" fill="#4ce600"/><circle cx="14.5" cy="13.2" r="0.800" fill="#4ce600"/></pattern>
<pattern id="dotsp" width="16" height="16" patternUnits="userSpaceOnUse"><rect width="16" height="16" fill="#eedfe4"/><circle cx="1.5" cy="2" r="0.800" fill="#4ce600"/><circle cx="7.5" cy="0.8" r="0.800" fill="#4ce600"/><circle cx="12.5" cy="3.5" r="0.800" fill="#4ce600"/><circle cx="4" cy="6.5" r="0.800" fill="#4ce600"/><circle cx="10" cy="8" r="0.800" fill="#4ce600"/><circle cx="15" cy="9.5" r="0.800" fill="#4ce600"/><circle cx="1" cy="11" r="0.800" fill="#4ce600"/><circle cx="6.5" cy="12.5" r="0.800" fill="#4ce600"/><circle cx="12" cy="14" r="0.800" fill="#4ce600"/><circle cx="3.5" cy="15.5" r="0.800" fill="#4ce600"/><circle cx="8.5" cy="4.2" r="0.800" fill="#4ce600"/><circle cx="14.5" cy="13.2" r="0.800" fill="#4ce600"/></pattern></defs>
<rect x="453" y="166" width="1147" height="225" fill="#f1f0cf"/>
<path d="M454.5 180.0 L488.9 183.5 L563.7 178.5" fill="none" stroke="#bfbba6" stroke-width="4.5" stroke-linejoin="round" stroke-linecap="round"/>
<path d="M559.3 178.7 L554.5 186.5 L562.3 192.4 L568.1 206.0 L562.3 217.7 L550.6 223.6" fill="none" stroke="#bfbba6" stroke-width="4.2" stroke-linejoin="round" stroke-linecap="round"/>
<path d="M536.9 215.8 L544.7 196.3 L554.5 186.5" fill="none" stroke="#bfbba6" stroke-width="4.2" stroke-linejoin="round" stroke-linecap="round"/>
<path d="M536.9 215.8 L542.8 231.4 L554.5 239.2 L568.1 237.2" fill="none" stroke="#bfbba6" stroke-width="4.2" stroke-linejoin="round" stroke-linecap="round"/>
<path d="M546.7 225.5 L548.6 245.0 L558.4 258.7 L554.5 276.3" fill="none" stroke="#bfbba6" stroke-width="4.2" stroke-linejoin="round" stroke-linecap="round"/>
<path d="M538.9 264.6 L546.7 252.9 L558.4 258.7" fill="none" stroke="#bfbba6" stroke-width="4.2" stroke-linejoin="round" stroke-linecap="round"/>
<path d="M564.2 235.3 L568.1 243.1" fill="none" stroke="#bfbba6" stroke-width="4.2" stroke-linejoin="round" stroke-linecap="round"/>
<path d="M496.9 201.1 L511.5 200.2 L509.6 206.0" fill="none" stroke="#bfbba6" stroke-width="4.2" stroke-linejoin="round" stroke-linecap="round"/>
<path d="M499.8 213.8 L511.5 221.6" fill="none" stroke="#bfbba6" stroke-width="4.2" stroke-linejoin="round" stroke-linecap="round"/>
<path d="M470.6 284.1 L482.3 272.4 L501.8 273.3 L499.8 280.2" fill="none" stroke="#bfbba6" stroke-width="4.2" stroke-linejoin="round" stroke-linecap="round"/>
<path d="M482.3 258.7 L494.0 262.6" fill="none" stroke="#bfbba6" stroke-width="4.2" stroke-linejoin="round" stroke-linecap="round"/>
<path d="M472.5 276.3 L478.4 293.8 L470.6 303.6" fill="none" stroke="#bfbba6" stroke-width="4.2" stroke-linejoin="round" stroke-linecap="round"/>
<path d="M453.0 301.6 L464.7 291.9" fill="none" stroke="#bfbba6" stroke-width="4.2" stroke-linejoin="round" stroke-linecap="round"/>
<path d="M577.9 186.5 L597.4 186.5 L603.2 196.3 L615.0 202.1" fill="none" stroke="#bfbba6" stroke-width="4.2" stroke-linejoin="round" stroke-linecap="round"/>
<path d="M595.4 170.9 L597.4 186.5" fill="none" stroke="#bfbba6" stroke-width="4.2" stroke-linejoin="round" stroke-linecap="round"/>
<path d="M577.9 191.4 L596.4 192.0" fill="none" stroke="#bfbba6" stroke-width="4.2" stroke-linejoin="round" stroke-linecap="round"/>
<path d="M509.6 229.4 L527.1 235.3" fill="none" stroke="#bfbba6" stroke-width="4.2" stroke-linejoin="round" stroke-linecap="round"/>
<path d="M517.4 217.7 L525.2 225.5" fill="none" stroke="#bfbba6" stroke-width="4.2" stroke-linejoin="round" stroke-linecap="round"/>
<path d="M526.3 209.9 L536.7 284.6 L545.7 332.5 L544.2 387.8" fill="none" stroke="#bfbba6" stroke-width="4.5" stroke-linejoin="round" stroke-linecap="round"/>
<path d="M467.9 278.7 L485.9 263.7 L494.9 254.7" fill="none" stroke="#bfbba6" stroke-width="4.5" stroke-linejoin="round" stroke-linecap="round"/>
<path d="M473.9 272.7 L479.9 290.6 L467.9 305.6 L456.0 314.6" fill="none" stroke="#bfbba6" stroke-width="4.5" stroke-linejoin="round" stroke-linecap="round"/>
<path d="M456.0 344.5 L467.9 371.4" fill="none" stroke="#bfbba6" stroke-width="4.5" stroke-linejoin="round" stroke-linecap="round"/>
<path d="M479.9 332.5 L500.8 335.5 L499.4 341.5" fill="none" stroke="#bfbba6" stroke-width="4.5" stroke-linejoin="round" stroke-linecap="round"/>
<path d="M456.0 332.5 L465.0 344.5 L459.0 356.4" fill="none" stroke="#bfbba6" stroke-width="4.5" stroke-linejoin="round" stroke-linecap="round"/>
<path d="M622.0 263.7 L629.5 290.6 L644.4 344.5" fill="none" stroke="#bfbba6" stroke-width="4.5" stroke-linejoin="round" stroke-linecap="round"/>
<path d="M632.5 241.3 L641.4 278.7 L650.4 323.5 L657.9 325.0" fill="none" stroke="#bfbba6" stroke-width="4.5" stroke-linejoin="round" stroke-linecap="round"/>
<path d="M644.4 239.8 L656.4 320.5" fill="none" stroke="#bfbba6" stroke-width="4.5" stroke-linejoin="round" stroke-linecap="round"/>
<path d="M599.6 305.6 L647.4 299.6" fill="none" stroke="#bfbba6" stroke-width="4.5" stroke-linejoin="round" stroke-linecap="round"/>
<path d="M601.0 317.5 L620.5 314.6" fill="none" stroke="#bfbba6" stroke-width="4.5" stroke-linejoin="round" stroke-linecap="round"/>
<path d="M602.5 328.0 L623.5 325.0" fill="none" stroke="#bfbba6" stroke-width="4.5" stroke-linejoin="round" stroke-linecap="round"/>
<path d="M605.5 338.5 L626.5 335.5" fill="none" stroke="#bfbba6" stroke-width="4.5" stroke-linejoin="round" stroke-linecap="round"/>
<path d="M608.5 347.5 L638.4 341.5" fill="none" stroke="#bfbba6" stroke-width="4.5" stroke-linejoin="round" stroke-linecap="round"/>
<path d="M632.5 251.7 L653.4 250.2" fill="none" stroke="#bfbba6" stroke-width="4.5" stroke-linejoin="round" stroke-linecap="round"/>
<path d="M634.8 263.7 L656.4 261.3" fill="none" stroke="#bfbba6" stroke-width="4.5" stroke-linejoin="round" stroke-linecap="round"/>
<path d="M637.8 274.2 L658.8 272.1" fill="none" stroke="#bfbba6" stroke-width="4.5" stroke-linejoin="round" stroke-linecap="round"/>
<path d="M639.9 286.1 L659.4 284.0" fill="none" stroke="#bfbba6" stroke-width="4.5" stroke-linejoin="round" stroke-linecap="round"/>
<path d="M605.5 296.6 L617.5 294.2" fill="none" stroke="#bfbba6" stroke-width="4.5" stroke-linejoin="round" stroke-linecap="round"/>
<path d="M545.7 387.8 L647.4 344.5 L750.0 296.6" fill="none" stroke="#bfbba6" stroke-width="4.6" stroke-linejoin="round" stroke-linecap="round"/>
<path d="M719.2 233.8 L750.0 229.3" fill="none" stroke="#bfbba6" stroke-width="4.5" stroke-linejoin="round" stroke-linecap="round"/>
<path d="M720.7 233.8 L728.2 296.6" fill="none" stroke="#bfbba6" stroke-width="4.5" stroke-linejoin="round" stroke-linecap="round"/>
<path d="M737.1 248.7 L750.0 263.7" fill="none" stroke="#bfbba6" stroke-width="4.5" stroke-linejoin="round" stroke-linecap="round"/>
<path d="M728.2 326.5 L750.0 323.5" fill="none" stroke="#bfbba6" stroke-width="4.5" stroke-linejoin="round" stroke-linecap="round"/>
<path d="M734.2 350.4 L750.0 347.5" fill="none" stroke="#bfbba6" stroke-width="4.5" stroke-linejoin="round" stroke-linecap="round"/>
<path d="M734.2 350.4 L734.2 374.4 L750.0 378.0" fill="none" stroke="#bfbba6" stroke-width="4.5" stroke-linejoin="round" stroke-linecap="round"/>
<path d="M671.3 233.8 L677.3 290.6" fill="none" stroke="#bfbba6" stroke-width="4.5" stroke-linejoin="round" stroke-linecap="round"/>
<path d="M683.3 233.8 L689.3 287.6" fill="none" stroke="#bfbba6" stroke-width="4.5" stroke-linejoin="round" stroke-linecap="round"/>
<path d="M659.4 269.7 L707.2 263.7" fill="none" stroke="#bfbba6" stroke-width="4.5" stroke-linejoin="round" stroke-linecap="round"/>
<path d="M677.3 251.7 L698.3 248.7" fill="none" stroke="#bfbba6" stroke-width="4.5" stroke-linejoin="round" stroke-linecap="round"/>
<path d="M668.3 308.6 L672.8 299.6 L689.3 296.6 L695.3 305.6 L690.8 317.5 L675.8 320.5 L668.3 308.6" fill="none" stroke="#bfbba6" stroke-width="4.5" stroke-linejoin="round" stroke-linecap="round"/>
<path d="M578.6 182.9 L599.6 181.5 L605.5 194.9 L617.5 203.9" fill="none" stroke="#bfbba6" stroke-width="4.5" stroke-linejoin="round" stroke-linecap="round"/>
<path d="M593.6 168.0 L595.1 182.9" fill="none" stroke="#bfbba6" stroke-width="4.5" stroke-linejoin="round" stroke-linecap="round"/>
<path d="M647.4 344.5 L656.4 386.3" fill="none" stroke="#bfbba6" stroke-width="4.5" stroke-linejoin="round" stroke-linecap="round"/>
<path d="M608.5 347.5 L617.5 374.4 L611.5 387.8" fill="none" stroke="#bfbba6" stroke-width="4.5" stroke-linejoin="round" stroke-linecap="round"/>
<path d="M740.0 182.9 L755.0 168.0" fill="none" stroke="#bfbba6" stroke-width="4.5" stroke-linejoin="round" stroke-linecap="round"/>
<path d="M769.9 171.0 L772.9 191.9 L859.6 188.9 L889.6 180.0 L919.5 178.5 L928.4 185.9 L919.5 200.9 L901.5 205.4 L886.6 191.9" fill="none" stroke="#bfbba6" stroke-width="4.5" stroke-linejoin="round" stroke-linecap="round"/>
<path d="M775.9 174.0 L808.8 172.5 L826.7 180.0" fill="none" stroke="#bfbba6" stroke-width="4.5" stroke-linejoin="round" stroke-linecap="round"/>
<path d="M765.4 187.4 L778.9 194.9 L775.9 209.9 L757.9 221.8 L740.0 229.3" fill="none" stroke="#bfbba6" stroke-width="4.5" stroke-linejoin="round" stroke-linecap="round"/>
<path d="M746.0 206.9 L755.0 203.9 L757.9 214.4" fill="none" stroke="#bfbba6" stroke-width="4.5" stroke-linejoin="round" stroke-linecap="round"/>
<path d="M792.3 194.9 L795.3 229.3" fill="none" stroke="#bfbba6" stroke-width="4.5" stroke-linejoin="round" stroke-linecap="round"/>
<path d="M740.0 248.7 L766.9 233.8 L795.3 229.3 L808.8 239.8 L829.7 245.8 L847.7 229.3 L865.6 191.9" fill="none" stroke="#bfbba6" stroke-width="4.5" stroke-linejoin="round" stroke-linecap="round"/>
<path d="M784.9 248.7 L804.3 257.7 L814.8 253.2 L811.8 244.3" fill="none" stroke="#bfbba6" stroke-width="4.5" stroke-linejoin="round" stroke-linecap="round"/>
<path d="M816.3 211.4 L855.2 212.9 L859.6 229.3 L864.1 244.3" fill="none" stroke="#bfbba6" stroke-width="4.5" stroke-linejoin="round" stroke-linecap="round"/>
<path d="M826.7 212.9 L828.2 223.3" fill="none" stroke="#bfbba6" stroke-width="4.5" stroke-linejoin="round" stroke-linecap="round"/>
<path d="M859.6 218.8 L868.6 209.9 L880.6 205.4" fill="none" stroke="#bfbba6" stroke-width="4.5" stroke-linejoin="round" stroke-linecap="round"/>
<path d="M868.6 232.3 L871.6 221.8 L895.5 214.4" fill="none" stroke="#bfbba6" stroke-width="4.5" stroke-linejoin="round" stroke-linecap="round"/>
<path d="M877.6 206.9 L871.6 221.8" fill="none" stroke="#bfbba6" stroke-width="4.5" stroke-linejoin="round" stroke-linecap="round"/>
<path d="M740.0 296.6 L829.7 263.7 L949.4 203.9 L1003.2 197.9 L1040.0 194.9" fill="none" stroke="#bfbba6" stroke-width="4.6" stroke-linejoin="round" stroke-linecap="round"/>
<path d="M831.2 263.7 L838.7 284.6 L841.7 340.0" fill="none" stroke="#bfbba6" stroke-width="4.5" stroke-linejoin="round" stroke-linecap="round"/>
<path d="M838.7 284.6 L919.5 302.6" fill="none" stroke="#bfbba6" stroke-width="4.5" stroke-linejoin="round" stroke-linecap="round"/>
<path d="M858.1 287.6 L864.1 323.5" fill="none" stroke="#bfbba6" stroke-width="4.5" stroke-linejoin="round" stroke-linecap="round"/>
<path d="M874.6 292.1 L879.1 326.5" fill="none" stroke="#bfbba6" stroke-width="4.5" stroke-linejoin="round" stroke-linecap="round"/>
<path d="M895.5 296.6 L900.0 329.5" fill="none" stroke="#bfbba6" stroke-width="4.5" stroke-linejoin="round" stroke-linecap="round"/>
<path d="M916.5 301.1 L922.5 322.0" fill="none" stroke="#bfbba6" stroke-width="4.5" stroke-linejoin="round" stroke-linecap="round"/>
<path d="M793.8 278.7 L796.8 314.6 L811.8 335.5 L796.8 362.4" fill="none" stroke="#bfbba6" stroke-width="4.5" stroke-linejoin="round" stroke-linecap="round"/>
<path d="M766.9 290.6 L772.9 320.5 L777.4 371.4 L740.0 378.9" fill="none" stroke="#bfbba6" stroke-width="4.5" stroke-linejoin="round" stroke-linecap="round"/>
<path d="M740.0 325.0 L771.4 323.5" fill="none" stroke="#bfbba6" stroke-width="4.5" stroke-linejoin="round" stroke-linecap="round"/>
<path d="M740.0 351.9 L775.9 347.5" fill="none" stroke="#bfbba6" stroke-width="4.5" stroke-linejoin="round" stroke-linecap="round"/>
<path d="M740.0 302.6 L752.0 293.6 L746.0 278.7 L740.0 281.7" fill="none" stroke="#bfbba6" stroke-width="4.5" stroke-linejoin="round" stroke-linecap="round"/>
<path d="M952.4 205.4 L955.4 227.8 L946.4 245.8 L949.4 263.7" fill="none" stroke="#bfbba6" stroke-width="4.5" stroke-linejoin="round" stroke-linecap="round"/>
<path d="M988.3 200.9 L994.2 253.2" fill="none" stroke="#bfbba6" stroke-width="4.5" stroke-linejoin="round" stroke-linecap="round"/>
<path d="M926.9 214.4 L934.4 224.8" fill="none" stroke="#bfbba6" stroke-width="4.5" stroke-linejoin="round" stroke-linecap="round"/>
<path d="M952.4 239.8 L977.8 236.8 L977.8 247.3" fill="none" stroke="#bfbba6" stroke-width="3.0" stroke-linejoin="round" stroke-linecap="round"/>
<path d="M1013.7 194.9 L1040.0 191.9" fill="none" stroke="#bfbba6" stroke-width="4.5" stroke-linejoin="round" stroke-linecap="round"/>
<path d="M1015.2 218.8 L1016.7 226.3 L1040.0 227.8" fill="none" stroke="#bfbba6" stroke-width="4.5" stroke-linejoin="round" stroke-linecap="round"/>
<path d="M1030.1 197.9 L1031.6 224.8" fill="none" stroke="#bfbba6" stroke-width="4.5" stroke-linejoin="round" stroke-linecap="round"/>
<path d="M982.3 371.4 L988.3 389.3" fill="none" stroke="#bfbba6" stroke-width="4.5" stroke-linejoin="round" stroke-linecap="round"/>
<path d="M946.4 344.5 L955.4 348.1" fill="none" stroke="#bfbba6" stroke-width="4.5" stroke-linejoin="round" stroke-linecap="round"/>
<path d="M946.4 277.2 L967.3 275.7 L965.8 287.6 L947.9 289.1 L946.4 277.2" fill="none" stroke="#bfbba6" stroke-width="2.9000000000000004" stroke-linejoin="round" stroke-linecap="round"/>
<path d="M1030.0 194.9 L1083.8 177.0 L1098.8 168.0" fill="none" stroke="#bfbba6" stroke-width="4.5" stroke-linejoin="round" stroke-linecap="round"/>
<path d="M1030.0 203.9 L1042.0 203.9 L1047.9 221.8 L1030.0 224.8" fill="none" stroke="#bfbba6" stroke-width="4.5" stroke-linejoin="round" stroke-linecap="round"/>
<path d="M1064.4 203.9 L1089.8 191.9 L1094.3 180.0" fill="none" stroke="#bfbba6" stroke-width="4.5" stroke-linejoin="round" stroke-linecap="round"/>
<path d="M1065.9 224.8 L1086.8 212.9 L1082.3 230.8" fill="none" stroke="#bfbba6" stroke-width="4.5" stroke-linejoin="round" stroke-linecap="round"/>
<path d="M1086.8 194.9 L1094.3 206.9 L1107.8 203.9" fill="none" stroke="#bfbba6" stroke-width="4.5" stroke-linejoin="round" stroke-linecap="round"/>
<path d="M1094.3 171.0 L1113.7 188.9 L1131.7 197.9" fill="none" stroke="#bfbba6" stroke-width="4.5" stroke-linejoin="round" stroke-linecap="round"/>
<path d="M1119.7 229.3 L1149.6 221.8" fill="none" stroke="#bfbba6" stroke-width="4.5" stroke-linejoin="round" stroke-linecap="round"/>
<path d="M1047.9 254.7 L1068.9 239.8" fill="none" stroke="#bfbba6" stroke-width="3.3" stroke-linejoin="round" stroke-linecap="round"/>
<path d="M1173.6 171.0 L1197.5 194.9 L1209.5 215.8" fill="none" stroke="#bfbba6" stroke-width="4.5" stroke-linejoin="round" stroke-linecap="round"/>
<path d="M1185.5 182.9 L1209.5 174.0" fill="none" stroke="#bfbba6" stroke-width="4.5" stroke-linejoin="round" stroke-linecap="round"/>
<path d="M1197.5 194.9 L1221.4 206.9" fill="none" stroke="#bfbba6" stroke-width="4.5" stroke-linejoin="round" stroke-linecap="round"/>
<path d="M1206.5 200.9 L1215.4 182.9" fill="none" stroke="#bfbba6" stroke-width="4.5" stroke-linejoin="round" stroke-linecap="round"/>
<path d="M1254.3 233.8 L1287.2 229.3" fill="none" stroke="#bfbba6" stroke-width="3.3" stroke-linejoin="round" stroke-linecap="round"/>
<path d="M1251.3 242.8 L1284.2 239.8" fill="none" stroke="#bfbba6" stroke-width="3.3" stroke-linejoin="round" stroke-linecap="round"/>
<path d="M1257.3 251.7 L1278.3 248.7" fill="none" stroke="#bfbba6" stroke-width="3.3" stroke-linejoin="round" stroke-linecap="round"/>
<path d="M1266.3 224.8 L1269.3 254.7" fill="none" stroke="#bfbba6" stroke-width="3.3" stroke-linejoin="round" stroke-linecap="round"/>
<path d="M1257.3 203.9 L1278.3 200.9 L1299.2 188.9" fill="none" stroke="#bfbba6" stroke-width="4.5" stroke-linejoin="round" stroke-linecap="round"/>
<path d="M1308.2 168.0 L1311.2 182.9 L1330.0 185.9" fill="none" stroke="#bfbba6" stroke-width="4.5" stroke-linejoin="round" stroke-linecap="round"/>
<path d="M1221.4 171.0 L1239.4 168.0" fill="none" stroke="#bfbba6" stroke-width="4.5" stroke-linejoin="round" stroke-linecap="round"/>
<path d="M1317.1 168.0 L1318.6 182.9" fill="none" stroke="#bfbba6" stroke-width="4.5" stroke-linejoin="round" stroke-linecap="round"/>
<path d="M1319.0 168.0 L1322.0 185.9 L1333.9 188.9 L1336.9 180.0" fill="none" stroke="#bfbba6" stroke-width="4.0" stroke-linejoin="round" stroke-linecap="round"/>
<path d="M1357.9 218.8 L1399.7 217.3" fill="none" stroke="#bfbba6" stroke-width="3.1" stroke-linejoin="round" stroke-linecap="round"/>
<path d="M1360.8 235.3 L1450.6 229.3" fill="none" stroke="#bfbba6" stroke-width="3.1" stroke-linejoin="round" stroke-linecap="round"/>
<path d="M1363.8 251.7 L1399.7 245.8" fill="none" stroke="#bfbba6" stroke-width="3.1" stroke-linejoin="round" stroke-linecap="round"/>
<path d="M1405.7 197.9 L1435.6 194.9" fill="none" stroke="#bfbba6" stroke-width="3.1" stroke-linejoin="round" stroke-linecap="round"/>
<path d="M1408.7 212.9 L1441.6 209.9" fill="none" stroke="#bfbba6" stroke-width="3.1" stroke-linejoin="round" stroke-linecap="round"/>
<path d="M1411.7 239.8 L1450.6 236.8" fill="none" stroke="#bfbba6" stroke-width="3.1" stroke-linejoin="round" stroke-linecap="round"/>
<path d="M1369.8 200.9 L1374.3 254.7" fill="none" stroke="#bfbba6" stroke-width="3.1" stroke-linejoin="round" stroke-linecap="round"/>
<path d="M1381.8 197.9 L1387.8 251.7" fill="none" stroke="#bfbba6" stroke-width="3.1" stroke-linejoin="round" stroke-linecap="round"/>
<path d="M1405.7 182.9 L1414.7 245.8" fill="none" stroke="#bfbba6" stroke-width="3.1" stroke-linejoin="round" stroke-linecap="round"/>
<path d="M1423.7 182.9 L1432.6 244.3" fill="none" stroke="#bfbba6" stroke-width="3.1" stroke-linejoin="round" stroke-linecap="round"/>
<path d="M1438.6 194.9 L1444.6 239.8" fill="none" stroke="#bfbba6" stroke-width="3.1" stroke-linejoin="round" stroke-linecap="round"/>
<path d="M1357.9 227.8 L1360.8 254.7" fill="none" stroke="#bfbba6" stroke-width="3.1" stroke-linejoin="round" stroke-linecap="round"/>
<path d="M1393.7 200.9 L1396.7 215.8" fill="none" stroke="#bfbba6" stroke-width="3.1" stroke-linejoin="round" stroke-linecap="round"/>
<path d="M1450.6 229.3 L1477.5 218.8 L1489.5 197.9 L1519.4 193.4 L1579.2 177.0 L1601.6 172.5" fill="none" stroke="#bfbba6" stroke-width="4.2" stroke-linejoin="round" stroke-linecap="round"/>
<path d="M1453.6 203.9 L1471.5 200.9 L1474.5 221.8" fill="none" stroke="#bfbba6" stroke-width="3.1" stroke-linejoin="round" stroke-linecap="round"/>
<path d="M1465.5 239.8 L1489.5 236.8 L1486.5 218.8" fill="none" stroke="#bfbba6" stroke-width="3.1" stroke-linejoin="round" stroke-linecap="round"/>
<path d="M1501.4 200.9 L1507.4 221.8 L1525.4 218.8" fill="none" stroke="#bfbba6" stroke-width="3.1" stroke-linejoin="round" stroke-linecap="round"/>
<path d="M1519.4 197.9 L1531.3 224.8" fill="none" stroke="#bfbba6" stroke-width="3.1" stroke-linejoin="round" stroke-linecap="round"/>
<path d="M1549.3 191.9 L1558.3 212.9" fill="none" stroke="#bfbba6" stroke-width="3.1" stroke-linejoin="round" stroke-linecap="round"/>
<path d="M1570.2 185.9 L1573.2 197.9" fill="none" stroke="#bfbba6" stroke-width="3.1" stroke-linejoin="round" stroke-linecap="round"/>
<path d="M1495.4 206.9 L1498.4 218.8" fill="none" stroke="#bfbba6" stroke-width="3.1" stroke-linejoin="round" stroke-linecap="round"/>
<path d="M1537.3 194.9 L1540.3 209.9" fill="none" stroke="#bfbba6" stroke-width="3.1" stroke-linejoin="round" stroke-linecap="round"/>
<path d="M1465.5 277.2 L1534.3 260.7 L1564.2 253.2 L1601.6 263.7" fill="none" stroke="#bfbba6" stroke-width="4.4" stroke-linejoin="round" stroke-linecap="round"/>
<path d="M1429.6 292.1 L1450.6 284.6 L1465.5 277.2" fill="none" stroke="#bfbba6" stroke-width="3.1" stroke-linejoin="round" stroke-linecap="round"/>
<path d="M1450.6 275.7 L1459.6 284.6" fill="none" stroke="#bfbba6" stroke-width="3.1" stroke-linejoin="round" stroke-linecap="round"/>
<path d="M1480.5 281.7 L1483.5 290.6" fill="none" stroke="#bfbba6" stroke-width="3.1" stroke-linejoin="round" stroke-linecap="round"/>
<path d="M1528.3 266.7 L1537.3 278.7" fill="none" stroke="#bfbba6" stroke-width="3.1" stroke-linejoin="round" stroke-linecap="round"/>
<path d="M1549.3 257.7 L1561.2 284.6" fill="none" stroke="#bfbba6" stroke-width="3.1" stroke-linejoin="round" stroke-linecap="round"/>
<path d="M1555.3 254.7 L1570.2 278.7" fill="none" stroke="#bfbba6" stroke-width="3.1" stroke-linejoin="round" stroke-linecap="round"/>
<path d="M1489.5 275.7 L1498.4 281.7" fill="none" stroke="#bfbba6" stroke-width="3.1" stroke-linejoin="round" stroke-linecap="round"/>
<path d="M1540.3 254.7 L1546.3 269.7" fill="none" stroke="#bfbba6" stroke-width="3.1" stroke-linejoin="round" stroke-linecap="round"/>
<path d="M1477.5 320.5 L1501.4 316.0 L1519.4 320.5 L1516.4 350.4 L1501.4 347.5" fill="none" stroke="#bfbba6" stroke-width="4.5" stroke-linejoin="round" stroke-linecap="round"/>
<path d="M1501.4 305.6 L1504.4 332.5" fill="none" stroke="#bfbba6" stroke-width="3.1" stroke-linejoin="round" stroke-linecap="round"/>
<path d="M1549.3 326.5 L1552.3 353.4 L1601.6 344.5" fill="none" stroke="#bfbba6" stroke-width="4.0" stroke-linejoin="round" stroke-linecap="round"/>
<path d="M1579.2 308.6 L1588.2 296.6 L1601.6 293.6" fill="none" stroke="#bfbba6" stroke-width="4.0" stroke-linejoin="round" stroke-linecap="round"/>
<path d="M1579.2 308.6 L1583.7 341.5" fill="none" stroke="#bfbba6" stroke-width="4.0" stroke-linejoin="round" stroke-linecap="round"/>
<path d="M1567.2 314.6 L1579.2 308.6" fill="none" stroke="#bfbba6" stroke-width="4.0" stroke-linejoin="round" stroke-linecap="round"/>
<path d="M1591.2 308.6 L1594.2 341.5" fill="none" stroke="#bfbba6" stroke-width="4.0" stroke-linejoin="round" stroke-linecap="round"/>
<path d="M1519.4 374.4 L1537.3 371.4" fill="none" stroke="#bfbba6" stroke-width="3.1" stroke-linejoin="round" stroke-linecap="round"/>
<path d="M1573.2 374.4 L1588.2 389.3" fill="none" stroke="#bfbba6" stroke-width="4.5" stroke-linejoin="round" stroke-linecap="round"/>
<path d="M1474.5 299.6 L1501.4 298.1" fill="none" stroke="#bfbba6" stroke-width="3.0" stroke-linejoin="round" stroke-linecap="round"/>
<path d="M1477.5 332.5 L1489.5 356.4 L1486.5 374.4" fill="none" stroke="#bfbba6" stroke-width="3.1" stroke-linejoin="round" stroke-linecap="round"/>
<path d="M1519.4 332.5 L1528.3 347.5" fill="none" stroke="#bfbba6" stroke-width="3.1" stroke-linejoin="round" stroke-linecap="round"/>
<path d="M454.5 180.0 L488.9 183.5 L563.7 178.5" fill="none" stroke="#ffffff" stroke-width="2.7" stroke-linejoin="round" stroke-linecap="round"/>
<path d="M559.3 178.7 L554.5 186.5 L562.3 192.4 L568.1 206.0 L562.3 217.7 L550.6 223.6" fill="none" stroke="#ffffff" stroke-width="2.4" stroke-linejoin="round" stroke-linecap="round"/>
<path d="M536.9 215.8 L544.7 196.3 L554.5 186.5" fill="none" stroke="#ffffff" stroke-width="2.4" stroke-linejoin="round" stroke-linecap="round"/>
<path d="M536.9 215.8 L542.8 231.4 L554.5 239.2 L568.1 237.2" fill="none" stroke="#ffffff" stroke-width="2.4" stroke-linejoin="round" stroke-linecap="round"/>
<path d="M546.7 225.5 L548.6 245.0 L558.4 258.7 L554.5 276.3" fill="none" stroke="#ffffff" stroke-width="2.4" stroke-linejoin="round" stroke-linecap="round"/>
<path d="M538.9 264.6 L546.7 252.9 L558.4 258.7" fill="none" stroke="#ffffff" stroke-width="2.4" stroke-linejoin="round" stroke-linecap="round"/>
<path d="M564.2 235.3 L568.1 243.1" fill="none" stroke="#ffffff" stroke-width="2.4" stroke-linejoin="round" stroke-linecap="round"/>
<path d="M496.9 201.1 L511.5 200.2 L509.6 206.0" fill="none" stroke="#ffffff" stroke-width="2.4" stroke-linejoin="round" stroke-linecap="round"/>
<path d="M499.8 213.8 L511.5 221.6" fill="none" stroke="#ffffff" stroke-width="2.4" stroke-linejoin="round" stroke-linecap="round"/>
<path d="M470.6 284.1 L482.3 272.4 L501.8 273.3 L499.8 280.2" fill="none" stroke="#ffffff" stroke-width="2.4" stroke-linejoin="round" stroke-linecap="round"/>
<path d="M482.3 258.7 L494.0 262.6" fill="none" stroke="#ffffff" stroke-width="2.4" stroke-linejoin="round" stroke-linecap="round"/>
<path d="M472.5 276.3 L478.4 293.8 L470.6 303.6" fill="none" stroke="#ffffff" stroke-width="2.4" stroke-linejoin="round" stroke-linecap="round"/>
<path d="M453.0 301.6 L464.7 291.9" fill="none" stroke="#ffffff" stroke-width="2.4" stroke-linejoin="round" stroke-linecap="round"/>
<path d="M577.9 186.5 L597.4 186.5 L603.2 196.3 L615.0 202.1" fill="none" stroke="#ffffff" stroke-width="2.4" stroke-linejoin="round" stroke-linecap="round"/>
<path d="M595.4 170.9 L597.4 186.5" fill="none" stroke="#ffffff" stroke-width="2.4" stroke-linejoin="round" stroke-linecap="round"/>
<path d="M577.9 191.4 L596.4 192.0" fill="none" stroke="#ffffff" stroke-width="2.4" stroke-linejoin="round" stroke-linecap="round"/>
<path d="M509.6 229.4 L527.1 235.3" fill="none" stroke="#ffffff" stroke-width="2.4" stroke-linejoin="round" stroke-linecap="round"/>
<path d="M517.4 217.7 L525.2 225.5" fill="none" stroke="#ffffff" stroke-width="2.4" stroke-linejoin="round" stroke-linecap="round"/>
<path d="M526.3 209.9 L536.7 284.6 L545.7 332.5 L544.2 387.8" fill="none" stroke="#ffffff" stroke-width="2.7" stroke-linejoin="round" stroke-linecap="round"/>
<path d="M467.9 278.7 L485.9 263.7 L494.9 254.7" fill="none" stroke="#ffffff" stroke-width="2.7" stroke-linejoin="round" stroke-linecap="round"/>
<path d="M473.9 272.7 L479.9 290.6 L467.9 305.6 L456.0 314.6" fill="none" stroke="#ffffff" stroke-width="2.7" stroke-linejoin="round" stroke-linecap="round"/>
<path d="M456.0 344.5 L467.9 371.4" fill="none" stroke="#ffffff" stroke-width="2.7" stroke-linejoin="round" stroke-linecap="round"/>
<path d="M479.9 332.5 L500.8 335.5 L499.4 341.5" fill="none" stroke="#ffffff" stroke-width="2.7" stroke-linejoin="round" stroke-linecap="round"/>
<path d="M456.0 332.5 L465.0 344.5 L459.0 356.4" fill="none" stroke="#ffffff" stroke-width="2.7" stroke-linejoin="round" stroke-linecap="round"/>
<path d="M622.0 263.7 L629.5 290.6 L644.4 344.5" fill="none" stroke="#ffffff" stroke-width="2.7" stroke-linejoin="round" stroke-linecap="round"/>
<path d="M632.5 241.3 L641.4 278.7 L650.4 323.5 L657.9 325.0" fill="none" stroke="#ffffff" stroke-width="2.7" stroke-linejoin="round" stroke-linecap="round"/>
<path d="M644.4 239.8 L656.4 320.5" fill="none" stroke="#ffffff" stroke-width="2.7" stroke-linejoin="round" stroke-linecap="round"/>
<path d="M599.6 305.6 L647.4 299.6" fill="none" stroke="#ffffff" stroke-width="2.7" stroke-linejoin="round" stroke-linecap="round"/>
<path d="M601.0 317.5 L620.5 314.6" fill="none" stroke="#ffffff" stroke-width="2.7" stroke-linejoin="round" stroke-linecap="round"/>
<path d="M602.5 328.0 L623.5 325.0" fill="none" stroke="#ffffff" stroke-width="2.7" stroke-linejoin="round" stroke-linecap="round"/>
<path d="M605.5 338.5 L626.5 335.5" fill="none" stroke="#ffffff" stroke-width="2.7" stroke-linejoin="round" stroke-linecap="round"/>
<path d="M608.5 347.5 L638.4 341.5" fill="none" stroke="#ffffff" stroke-width="2.7" stroke-linejoin="round" stroke-linecap="round"/>
<path d="M632.5 251.7 L653.4 250.2" fill="none" stroke="#ffffff" stroke-width="2.7" stroke-linejoin="round" stroke-linecap="round"/>
<path d="M634.8 263.7 L656.4 261.3" fill="none" stroke="#ffffff" stroke-width="2.7" stroke-linejoin="round" stroke-linecap="round"/>
<path d="M637.8 274.2 L658.8 272.1" fill="none" stroke="#ffffff" stroke-width="2.7" stroke-linejoin="round" stroke-linecap="round"/>
<path d="M639.9 286.1 L659.4 284.0" fill="none" stroke="#ffffff" stroke-width="2.7" stroke-linejoin="round" stroke-linecap="round"/>
<path d="M605.5 296.6 L617.5 294.2" fill="none" stroke="#ffffff" stroke-width="2.7" stroke-linejoin="round" stroke-linecap="round"/>
<path d="M545.7 387.8 L647.4 344.5 L750.0 296.6" fill="none" stroke="#ffffff" stroke-width="2.8" stroke-linejoin="round" stroke-linecap="round"/>
<path d="M719.2 233.8 L750.0 229.3" fill="none" stroke="#ffffff" stroke-width="2.7" stroke-linejoin="round" stroke-linecap="round"/>
<path d="M720.7 233.8 L728.2 296.6" fill="none" stroke="#ffffff" stroke-width="2.7" stroke-linejoin="round" stroke-linecap="round"/>
<path d="M737.1 248.7 L750.0 263.7" fill="none" stroke="#ffffff" stroke-width="2.7" stroke-linejoin="round" stroke-linecap="round"/>
<path d="M728.2 326.5 L750.0 323.5" fill="none" stroke="#ffffff" stroke-width="2.7" stroke-linejoin="round" stroke-linecap="round"/>
<path d="M734.2 350.4 L750.0 347.5" fill="none" stroke="#ffffff" stroke-width="2.7" stroke-linejoin="round" stroke-linecap="round"/>
<path d="M734.2 350.4 L734.2 374.4 L750.0 378.0" fill="none" stroke="#ffffff" stroke-width="2.7" stroke-linejoin="round" stroke-linecap="round"/>
<path d="M671.3 233.8 L677.3 290.6" fill="none" stroke="#ffffff" stroke-width="2.7" stroke-linejoin="round" stroke-linecap="round"/>
<path d="M683.3 233.8 L689.3 287.6" fill="none" stroke="#ffffff" stroke-width="2.7" stroke-linejoin="round" stroke-linecap="round"/>
<path d="M659.4 269.7 L707.2 263.7" fill="none" stroke="#ffffff" stroke-width="2.7" stroke-linejoin="round" stroke-linecap="round"/>
<path d="M677.3 251.7 L698.3 248.7" fill="none" stroke="#ffffff" stroke-width="2.7" stroke-linejoin="round" stroke-linecap="round"/>
<path d="M668.3 308.6 L672.8 299.6 L689.3 296.6 L695.3 305.6 L690.8 317.5 L675.8 320.5 L668.3 308.6" fill="none" stroke="#ffffff" stroke-width="2.7" stroke-linejoin="round" stroke-linecap="round"/>
<path d="M578.6 182.9 L599.6 181.5 L605.5 194.9 L617.5 203.9" fill="none" stroke="#ffffff" stroke-width="2.7" stroke-linejoin="round" stroke-linecap="round"/>
<path d="M593.6 168.0 L595.1 182.9" fill="none" stroke="#ffffff" stroke-width="2.7" stroke-linejoin="round" stroke-linecap="round"/>
<path d="M647.4 344.5 L656.4 386.3" fill="none" stroke="#ffffff" stroke-width="2.7" stroke-linejoin="round" stroke-linecap="round"/>
<path d="M608.5 347.5 L617.5 374.4 L611.5 387.8" fill="none" stroke="#ffffff" stroke-width="2.7" stroke-linejoin="round" stroke-linecap="round"/>
<path d="M740.0 182.9 L755.0 168.0" fill="none" stroke="#ffffff" stroke-width="2.7" stroke-linejoin="round" stroke-linecap="round"/>
<path d="M769.9 171.0 L772.9 191.9 L859.6 188.9 L889.6 180.0 L919.5 178.5 L928.4 185.9 L919.5 200.9 L901.5 205.4 L886.6 191.9" fill="none" stroke="#ffffff" stroke-width="2.7" stroke-linejoin="round" stroke-linecap="round"/>
<path d="M775.9 174.0 L808.8 172.5 L826.7 180.0" fill="none" stroke="#ffffff" stroke-width="2.7" stroke-linejoin="round" stroke-linecap="round"/>
<path d="M765.4 187.4 L778.9 194.9 L775.9 209.9 L757.9 221.8 L740.0 229.3" fill="none" stroke="#ffffff" stroke-width="2.7" stroke-linejoin="round" stroke-linecap="round"/>
<path d="M746.0 206.9 L755.0 203.9 L757.9 214.4" fill="none" stroke="#ffffff" stroke-width="2.7" stroke-linejoin="round" stroke-linecap="round"/>
<path d="M792.3 194.9 L795.3 229.3" fill="none" stroke="#ffffff" stroke-width="2.7" stroke-linejoin="round" stroke-linecap="round"/>
<path d="M740.0 248.7 L766.9 233.8 L795.3 229.3 L808.8 239.8 L829.7 245.8 L847.7 229.3 L865.6 191.9" fill="none" stroke="#ffffff" stroke-width="2.7" stroke-linejoin="round" stroke-linecap="round"/>
<path d="M784.9 248.7 L804.3 257.7 L814.8 253.2 L811.8 244.3" fill="none" stroke="#ffffff" stroke-width="2.7" stroke-linejoin="round" stroke-linecap="round"/>
<path d="M816.3 211.4 L855.2 212.9 L859.6 229.3 L864.1 244.3" fill="none" stroke="#ffffff" stroke-width="2.7" stroke-linejoin="round" stroke-linecap="round"/>
<path d="M826.7 212.9 L828.2 223.3" fill="none" stroke="#ffffff" stroke-width="2.7" stroke-linejoin="round" stroke-linecap="round"/>
<path d="M859.6 218.8 L868.6 209.9 L880.6 205.4" fill="none" stroke="#ffffff" stroke-width="2.7" stroke-linejoin="round" stroke-linecap="round"/>
<path d="M868.6 232.3 L871.6 221.8 L895.5 214.4" fill="none" stroke="#ffffff" stroke-width="2.7" stroke-linejoin="round" stroke-linecap="round"/>
<path d="M877.6 206.9 L871.6 221.8" fill="none" stroke="#ffffff" stroke-width="2.7" stroke-linejoin="round" stroke-linecap="round"/>
<path d="M740.0 296.6 L829.7 263.7 L949.4 203.9 L1003.2 197.9 L1040.0 194.9" fill="none" stroke="#ffffff" stroke-width="2.8" stroke-linejoin="round" stroke-linecap="round"/>
<path d="M831.2 263.7 L838.7 284.6 L841.7 340.0" fill="none" stroke="#ffffff" stroke-width="2.7" stroke-linejoin="round" stroke-linecap="round"/>
<path d="M838.7 284.6 L919.5 302.6" fill="none" stroke="#ffffff" stroke-width="2.7" stroke-linejoin="round" stroke-linecap="round"/>
<path d="M858.1 287.6 L864.1 323.5" fill="none" stroke="#ffffff" stroke-width="2.7" stroke-linejoin="round" stroke-linecap="round"/>
<path d="M874.6 292.1 L879.1 326.5" fill="none" stroke="#ffffff" stroke-width="2.7" stroke-linejoin="round" stroke-linecap="round"/>
<path d="M895.5 296.6 L900.0 329.5" fill="none" stroke="#ffffff" stroke-width="2.7" stroke-linejoin="round" stroke-linecap="round"/>
<path d="M916.5 301.1 L922.5 322.0" fill="none" stroke="#ffffff" stroke-width="2.7" stroke-linejoin="round" stroke-linecap="round"/>
<path d="M793.8 278.7 L796.8 314.6 L811.8 335.5 L796.8 362.4" fill="none" stroke="#ffffff" stroke-width="2.7" stroke-linejoin="round" stroke-linecap="round"/>
<path d="M766.9 290.6 L772.9 320.5 L777.4 371.4 L740.0 378.9" fill="none" stroke="#ffffff" stroke-width="2.7" stroke-linejoin="round" stroke-linecap="round"/>
<path d="M740.0 325.0 L771.4 323.5" fill="none" stroke="#ffffff" stroke-width="2.7" stroke-linejoin="round" stroke-linecap="round"/>
<path d="M740.0 351.9 L775.9 347.5" fill="none" stroke="#ffffff" stroke-width="2.7" stroke-linejoin="round" stroke-linecap="round"/>
<path d="M740.0 302.6 L752.0 293.6 L746.0 278.7 L740.0 281.7" fill="none" stroke="#ffffff" stroke-width="2.7" stroke-linejoin="round" stroke-linecap="round"/>
<path d="M952.4 205.4 L955.4 227.8 L946.4 245.8 L949.4 263.7" fill="none" stroke="#ffffff" stroke-width="2.7" stroke-linejoin="round" stroke-linecap="round"/>
<path d="M988.3 200.9 L994.2 253.2" fill="none" stroke="#ffffff" stroke-width="2.7" stroke-linejoin="round" stroke-linecap="round"/>
<path d="M926.9 214.4 L934.4 224.8" fill="none" stroke="#ffffff" stroke-width="2.7" stroke-linejoin="round" stroke-linecap="round"/>
<path d="M952.4 239.8 L977.8 236.8 L977.8 247.3" fill="none" stroke="#ffffff" stroke-width="1.2" stroke-linejoin="round" stroke-linecap="round"/>
<path d="M1013.7 194.9 L1040.0 191.9" fill="none" stroke="#ffffff" stroke-width="2.7" stroke-linejoin="round" stroke-linecap="round"/>
<path d="M1015.2 218.8 L1016.7 226.3 L1040.0 227.8" fill="none" stroke="#ffffff" stroke-width="2.7" stroke-linejoin="round" stroke-linecap="round"/>
<path d="M1030.1 197.9 L1031.6 224.8" fill="none" stroke="#ffffff" stroke-width="2.7" stroke-linejoin="round" stroke-linecap="round"/>
<path d="M982.3 371.4 L988.3 389.3" fill="none" stroke="#ffffff" stroke-width="2.7" stroke-linejoin="round" stroke-linecap="round"/>
<path d="M946.4 344.5 L955.4 348.1" fill="none" stroke="#ffffff" stroke-width="2.7" stroke-linejoin="round" stroke-linecap="round"/>
<path d="M946.4 277.2 L967.3 275.7 L965.8 287.6 L947.9 289.1 L946.4 277.2" fill="none" stroke="#ffffff" stroke-width="1.1" stroke-linejoin="round" stroke-linecap="round"/>
<path d="M1030.0 194.9 L1083.8 177.0 L1098.8 168.0" fill="none" stroke="#ffffff" stroke-width="2.7" stroke-linejoin="round" stroke-linecap="round"/>
<path d="M1030.0 203.9 L1042.0 203.9 L1047.9 221.8 L1030.0 224.8" fill="none" stroke="#ffffff" stroke-width="2.7" stroke-linejoin="round" stroke-linecap="round"/>
<path d="M1064.4 203.9 L1089.8 191.9 L1094.3 180.0" fill="none" stroke="#ffffff" stroke-width="2.7" stroke-linejoin="round" stroke-linecap="round"/>
<path d="M1065.9 224.8 L1086.8 212.9 L1082.3 230.8" fill="none" stroke="#ffffff" stroke-width="2.7" stroke-linejoin="round" stroke-linecap="round"/>
<path d="M1086.8 194.9 L1094.3 206.9 L1107.8 203.9" fill="none" stroke="#ffffff" stroke-width="2.7" stroke-linejoin="round" stroke-linecap="round"/>
<path d="M1094.3 171.0 L1113.7 188.9 L1131.7 197.9" fill="none" stroke="#ffffff" stroke-width="2.7" stroke-linejoin="round" stroke-linecap="round"/>
<path d="M1119.7 229.3 L1149.6 221.8" fill="none" stroke="#ffffff" stroke-width="2.7" stroke-linejoin="round" stroke-linecap="round"/>
<path d="M1047.9 254.7 L1068.9 239.8" fill="none" stroke="#ffffff" stroke-width="1.5" stroke-linejoin="round" stroke-linecap="round"/>
<path d="M1173.6 171.0 L1197.5 194.9 L1209.5 215.8" fill="none" stroke="#ffffff" stroke-width="2.7" stroke-linejoin="round" stroke-linecap="round"/>
<path d="M1185.5 182.9 L1209.5 174.0" fill="none" stroke="#ffffff" stroke-width="2.7" stroke-linejoin="round" stroke-linecap="round"/>
<path d="M1197.5 194.9 L1221.4 206.9" fill="none" stroke="#ffffff" stroke-width="2.7" stroke-linejoin="round" stroke-linecap="round"/>
<path d="M1206.5 200.9 L1215.4 182.9" fill="none" stroke="#ffffff" stroke-width="2.7" stroke-linejoin="round" stroke-linecap="round"/>
<path d="M1254.3 233.8 L1287.2 229.3" fill="none" stroke="#ffffff" stroke-width="1.5" stroke-linejoin="round" stroke-linecap="round"/>
<path d="M1251.3 242.8 L1284.2 239.8" fill="none" stroke="#ffffff" stroke-width="1.5" stroke-linejoin="round" stroke-linecap="round"/>
<path d="M1257.3 251.7 L1278.3 248.7" fill="none" stroke="#ffffff" stroke-width="1.5" stroke-linejoin="round" stroke-linecap="round"/>
<path d="M1266.3 224.8 L1269.3 254.7" fill="none" stroke="#ffffff" stroke-width="1.5" stroke-linejoin="round" stroke-linecap="round"/>
<path d="M1257.3 203.9 L1278.3 200.9 L1299.2 188.9" fill="none" stroke="#ffffff" stroke-width="2.7" stroke-linejoin="round" stroke-linecap="round"/>
<path d="M1308.2 168.0 L1311.2 182.9 L1330.0 185.9" fill="none" stroke="#ffffff" stroke-width="2.7" stroke-linejoin="round" stroke-linecap="round"/>
<path d="M1221.4 171.0 L1239.4 168.0" fill="none" stroke="#ffffff" stroke-width="2.7" stroke-linejoin="round" stroke-linecap="round"/>
<path d="M1317.1 168.0 L1318.6 182.9" fill="none" stroke="#ffffff" stroke-width="2.7" stroke-linejoin="round" stroke-linecap="round"/>
<path d="M1319.0 168.0 L1322.0 185.9 L1333.9 188.9 L1336.9 180.0" fill="none" stroke="#ffffff" stroke-width="2.2" stroke-linejoin="round" stroke-linecap="round"/>
<path d="M1357.9 218.8 L1399.7 217.3" fill="none" stroke="#ffffff" stroke-width="1.3" stroke-linejoin="round" stroke-linecap="round"/>
<path d="M1360.8 235.3 L1450.6 229.3" fill="none" stroke="#ffffff" stroke-width="1.3" stroke-linejoin="round" stroke-linecap="round"/>
<path d="M1363.8 251.7 L1399.7 245.8" fill="none" stroke="#ffffff" stroke-width="1.3" stroke-linejoin="round" stroke-linecap="round"/>
<path d="M1405.7 197.9 L1435.6 194.9" fill="none" stroke="#ffffff" stroke-width="1.3" stroke-linejoin="round" stroke-linecap="round"/>
<path d="M1408.7 212.9 L1441.6 209.9" fill="none" stroke="#ffffff" stroke-width="1.3" stroke-linejoin="round" stroke-linecap="round"/>
<path d="M1411.7 239.8 L1450.6 236.8" fill="none" stroke="#ffffff" stroke-width="1.3" stroke-linejoin="round" stroke-linecap="round"/>
<path d="M1369.8 200.9 L1374.3 254.7" fill="none" stroke="#ffffff" stroke-width="1.3" stroke-linejoin="round" stroke-linecap="round"/>
<path d="M1381.8 197.9 L1387.8 251.7" fill="none" stroke="#ffffff" stroke-width="1.3" stroke-linejoin="round" stroke-linecap="round"/>
<path d="M1405.7 182.9 L1414.7 245.8" fill="none" stroke="#ffffff" stroke-width="1.3" stroke-linejoin="round" stroke-linecap="round"/>
<path d="M1423.7 182.9 L1432.6 244.3" fill="none" stroke="#ffffff" stroke-width="1.3" stroke-linejoin="round" stroke-linecap="round"/>
<path d="M1438.6 194.9 L1444.6 239.8" fill="none" stroke="#ffffff" stroke-width="1.3" stroke-linejoin="round" stroke-linecap="round"/>
<path d="M1357.9 227.8 L1360.8 254.7" fill="none" stroke="#ffffff" stroke-width="1.3" stroke-linejoin="round" stroke-linecap="round"/>
<path d="M1393.7 200.9 L1396.7 215.8" fill="none" stroke="#ffffff" stroke-width="1.3" stroke-linejoin="round" stroke-linecap="round"/>
<path d="M1450.6 229.3 L1477.5 218.8 L1489.5 197.9 L1519.4 193.4 L1579.2 177.0 L1601.6 172.5" fill="none" stroke="#ffffff" stroke-width="2.4" stroke-linejoin="round" stroke-linecap="round"/>
<path d="M1453.6 203.9 L1471.5 200.9 L1474.5 221.8" fill="none" stroke="#ffffff" stroke-width="1.3" stroke-linejoin="round" stroke-linecap="round"/>
<path d="M1465.5 239.8 L1489.5 236.8 L1486.5 218.8" fill="none" stroke="#ffffff" stroke-width="1.3" stroke-linejoin="round" stroke-linecap="round"/>
<path d="M1501.4 200.9 L1507.4 221.8 L1525.4 218.8" fill="none" stroke="#ffffff" stroke-width="1.3" stroke-linejoin="round" stroke-linecap="round"/>
<path d="M1519.4 197.9 L1531.3 224.8" fill="none" stroke="#ffffff" stroke-width="1.3" stroke-linejoin="round" stroke-linecap="round"/>
<path d="M1549.3 191.9 L1558.3 212.9" fill="none" stroke="#ffffff" stroke-width="1.3" stroke-linejoin="round" stroke-linecap="round"/>
<path d="M1570.2 185.9 L1573.2 197.9" fill="none" stroke="#ffffff" stroke-width="1.3" stroke-linejoin="round" stroke-linecap="round"/>
<path d="M1495.4 206.9 L1498.4 218.8" fill="none" stroke="#ffffff" stroke-width="1.3" stroke-linejoin="round" stroke-linecap="round"/>
<path d="M1537.3 194.9 L1540.3 209.9" fill="none" stroke="#ffffff" stroke-width="1.3" stroke-linejoin="round" stroke-linecap="round"/>
<path d="M1465.5 277.2 L1534.3 260.7 L1564.2 253.2 L1601.6 263.7" fill="none" stroke="#ffffff" stroke-width="2.6" stroke-linejoin="round" stroke-linecap="round"/>
<path d="M1429.6 292.1 L1450.6 284.6 L1465.5 277.2" fill="none" stroke="#ffffff" stroke-width="1.3" stroke-linejoin="round" stroke-linecap="round"/>
<path d="M1450.6 275.7 L1459.6 284.6" fill="none" stroke="#ffffff" stroke-width="1.3" stroke-linejoin="round" stroke-linecap="round"/>
<path d="M1480.5 281.7 L1483.5 290.6" fill="none" stroke="#ffffff" stroke-width="1.3" stroke-linejoin="round" stroke-linecap="round"/>
<path d="M1528.3 266.7 L1537.3 278.7" fill="none" stroke="#ffffff" stroke-width="1.3" stroke-linejoin="round" stroke-linecap="round"/>
<path d="M1549.3 257.7 L1561.2 284.6" fill="none" stroke="#ffffff" stroke-width="1.3" stroke-linejoin="round" stroke-linecap="round"/>
<path d="M1555.3 254.7 L1570.2 278.7" fill="none" stroke="#ffffff" stroke-width="1.3" stroke-linejoin="round" stroke-linecap="round"/>
<path d="M1489.5 275.7 L1498.4 281.7" fill="none" stroke="#ffffff" stroke-width="1.3" stroke-linejoin="round" stroke-linecap="round"/>
<path d="M1540.3 254.7 L1546.3 269.7" fill="none" stroke="#ffffff" stroke-width="1.3" stroke-linejoin="round" stroke-linecap="round"/>
<path d="M1477.5 320.5 L1501.4 316.0 L1519.4 320.5 L1516.4 350.4 L1501.4 347.5" fill="none" stroke="#ffffff" stroke-width="2.7" stroke-linejoin="round" stroke-linecap="round"/>
<path d="M1501.4 305.6 L1504.4 332.5" fill="none" stroke="#ffffff" stroke-width="1.3" stroke-linejoin="round" stroke-linecap="round"/>
<path d="M1549.3 326.5 L1552.3 353.4 L1601.6 344.5" fill="none" stroke="#ffffff" stroke-width="2.2" stroke-linejoin="round" stroke-linecap="round"/>
<path d="M1579.2 308.6 L1588.2 296.6 L1601.6 293.6" fill="none" stroke="#ffffff" stroke-width="2.2" stroke-linejoin="round" stroke-linecap="round"/>
<path d="M1579.2 308.6 L1583.7 341.5" fill="none" stroke="#ffffff" stroke-width="2.2" stroke-linejoin="round" stroke-linecap="round"/>
<path d="M1567.2 314.6 L1579.2 308.6" fill="none" stroke="#ffffff" stroke-width="2.2" stroke-linejoin="round" stroke-linecap="round"/>
<path d="M1591.2 308.6 L1594.2 341.5" fill="none" stroke="#ffffff" stroke-width="2.2" stroke-linejoin="round" stroke-linecap="round"/>
<path d="M1519.4 374.4 L1537.3 371.4" fill="none" stroke="#ffffff" stroke-width="1.3" stroke-linejoin="round" stroke-linecap="round"/>
<path d="M1573.2 374.4 L1588.2 389.3" fill="none" stroke="#ffffff" stroke-width="2.7" stroke-linejoin="round" stroke-linecap="round"/>
<path d="M1474.5 299.6 L1501.4 298.1" fill="none" stroke="#ffffff" stroke-width="1.2" stroke-linejoin="round" stroke-linecap="round"/>
<path d="M1477.5 332.5 L1489.5 356.4 L1486.5 374.4" fill="none" stroke="#ffffff" stroke-width="1.3" stroke-linejoin="round" stroke-linecap="round"/>
<path d="M1519.4 332.5 L1528.3 347.5" fill="none" stroke="#ffffff" stroke-width="1.3" stroke-linejoin="round" stroke-linecap="round"/>
<path d="M482.9 384.8 L574.1 268.2 L659.4 165.0" fill="none" stroke="#cfcbb8" stroke-width="1.4" />
<path d="M573.5 163.5 L575.6 263.7 L583.1 390.8" fill="none" stroke="#d6d1be" stroke-width="6" />
<path d="M575.0 263.7 L582.5 390.8" fill="none" stroke="#8c8c8c" stroke-width="1.5" />
<path d="M1392.3 171.0 L1408.7 248.7 L1419.2 284.6" fill="none" stroke="#c9c5b5" stroke-width="1.4" />

<path d="M1088.3 247.3 L1136.2 228.4 L1206.5 263.7 L1197.5 284.6 L1089.8 284.6 Z" fill="#ecdce6" />
<path d="M1094.3 304.1 L1174.2 304.1 L1179.6 360.9 L1100.3 372.0 Z" fill="#ecdce6" />
<path d="M838.7 167.4 L864.1 167.4 L864.1 178.5 L840.2 180.0 Z" fill="#ecdce6" />
<path d="M1133.2 238.3 L1155.6 235.3 L1157.1 271.2 L1133.2 271.2 Z" fill="#f1f0cf" />
<path d="M1058.4 284.6 L1074.9 263.7 L1089.8 251.7 L1089.8 284.6 Z" fill="#8fd670" />
<path d="M1030.0 305.6 L1094.3 305.6 L1100.3 372.0 L1179.6 360.9 L1174.2 308.0 L1209.5 320.5 L1239.4 344.5 L1266.3 368.4 L1269.3 389.3 L1030.0 389.3 Z" fill="#8fd670" />
<path d="M1021.2 332.5 L1040.0 328.0 L1040.0 389.3 L1021.2 389.3 Z" fill="#8fd670" />
<path d="M1025.6 165.0 L1040.0 165.0 L1040.0 181.5 L1027.1 185.3 Z" fill="#4ce600" />
<path d="M1010.1 236.8 L1040.0 235.3 L1040.0 293.6 L1013.7 296.6 Z" fill="#4ce600" />
<path d="M1015.2 316.0 L1034.6 313.1 L1027.1 331.0 L1016.7 332.5 Z" fill="#4ce600" />
<path d="M1030.0 232.3 L1064.4 232.3 L1065.9 254.7 L1042.0 277.2 L1036.0 284.6 L1030.0 284.6 Z" fill="#4ce600" />
<path d="M1030.0 165.0 L1089.8 165.0 L1077.9 173.4 L1030.0 178.5 Z" fill="#4ce600" />
<path d="M712.2 202.1 L724.9 197.2 L726.8 202.1 L714.1 207.5 Z" fill="#4ce600" />
<path d="M1209.5 322.0 L1233.4 338.5 L1221.4 332.5 Z" fill="#4ce600" />
<path d="M1310.0 300.2 L1413.2 280.2 L1461.0 389.3 L1310.0 389.3 Z" fill="url(#dots)" stroke="#38a800" stroke-width="0.800"/>
<path d="M1429.6 307.1 L1467.0 299.6 L1489.5 389.3 L1465.5 389.3 Z" fill="url(#dots)" stroke="#38a800" stroke-width="0.800"/>
<path d="M1303.4 308.0 L1310.6 300.2 L1310.6 390.8 L1354.2 390.8 L1339.3 374.4 L1309.4 344.5 L1297.4 323.5 Z" fill="url(#dots)" />
<path d="M1280.4 327.0 L1289.3 323.0 L1309.1 306.2 L1313.0 308.2 L1322.9 328.9 L1340.7 358.6 L1356.5 368.5 L1376.2 376.4 L1382.2 390.2 L1283.4 390.2 Z" fill="url(#dotsp)" />
<path d="M1281.0 327.0 L1283.8 390.2" fill="none" stroke="#38a800" stroke-width="0.8" />

<path d="M440.0 306.0 L552.0 167.0 L560.0 157.0" fill="none" stroke="#e3a384" stroke-width="13" stroke-linejoin="round"/>
<path d="M440.0 306.0 L552.0 167.0 L560.0 157.0" fill="none" stroke="#f4bfa3" stroke-width="11" stroke-linejoin="round"/>
<path d="M699.8 162.0 L704.2 224.8 L710.2 299.6 L717.7 392.3" fill="none" stroke="#eaa27c" stroke-width="6.3" stroke-linejoin="round"/>
<path d="M699.8 162.0 L704.2 224.8 L710.2 299.6 L717.7 392.3" fill="none" stroke="#fbe4d2" stroke-width="4.5" stroke-linejoin="round"/>
<path d="M1438.6 162.0 L1453.6 239.8 L1465.5 290.6 L1477.5 344.5 L1491.0 392.3" fill="none" stroke="#eaa27c" stroke-width="6.3" stroke-linejoin="round"/>
<path d="M1438.6 162.0 L1453.6 239.8 L1465.5 290.6 L1477.5 344.5 L1491.0 392.3" fill="none" stroke="#fbe0cf" stroke-width="4.5" stroke-linejoin="round"/>
<path d="M1159.8 162.0 L1171.8 182.9 L1189.7 209.9 L1209.2 229.3" fill="none" stroke="#cf8262" stroke-width="8.1" stroke-linejoin="round"/>
<path d="M1159.8 162.0 L1171.8 182.9 L1189.7 209.9 L1209.2 229.3" fill="none" stroke="#f2b8a0" stroke-width="6.5" stroke-linejoin="round"/>
<path d="M1176.3 288.2 L1189.7 275.7 L1203.2 262.2 L1218.1 260.1 L1225.6 263.7" fill="none" stroke="#cf8262" stroke-width="6.4" stroke-linejoin="round" stroke-linecap="round"/>
<path d="M1195.1 276.3 L1204.7 268.2 L1215.2 269.7 L1228.6 284.6" fill="none" stroke="#cf8262" stroke-width="6.4" stroke-linejoin="round" stroke-linecap="round"/>
<path d="M1195.1 276.3 L1201.7 284.6 L1219.6 286.1" fill="none" stroke="#cf8262" stroke-width="6.4" stroke-linejoin="round" stroke-linecap="round"/>
<path d="M1225.6 263.7 L1249.6 268.2 L1267.5 277.2 L1279.5 285.2" fill="none" stroke="#cf8262" stroke-width="6.4" stroke-linejoin="round" stroke-linecap="round"/>
<path d="M1228.6 263.7 L1233.1 275.7 L1240.6 287.6" fill="none" stroke="#cf8262" stroke-width="6.4" stroke-linejoin="round" stroke-linecap="round"/>
<path d="M1189.7 300.2 L1212.2 304.1 L1219.6 320.5 L1231.6 332.5 L1251.0 337.9" fill="none" stroke="#cf8262" stroke-width="6.4" stroke-linejoin="round" stroke-linecap="round"/>
<path d="M1212.2 304.1 L1231.6 301.1 L1240.6 314.6 L1249.6 332.5" fill="none" stroke="#cf8262" stroke-width="6.4" stroke-linejoin="round" stroke-linecap="round"/>
<path d="M1282.5 299.6 L1267.5 313.1 L1263.0 328.0 L1252.5 337.0" fill="none" stroke="#cf8262" stroke-width="6.4" stroke-linejoin="round" stroke-linecap="round"/>
<path d="M1240.6 296.6 L1261.5 299.6 L1273.5 302.6" fill="none" stroke="#cf8262" stroke-width="6.4" stroke-linejoin="round" stroke-linecap="round"/>
<path d="M1176.3 288.2 L1189.7 275.7 L1203.2 262.2 L1218.1 260.1 L1225.6 263.7" fill="none" stroke="#e8997a" stroke-width="4.9" stroke-linejoin="round" stroke-linecap="round"/>
<path d="M1195.1 276.3 L1204.7 268.2 L1215.2 269.7 L1228.6 284.6" fill="none" stroke="#e8997a" stroke-width="4.9" stroke-linejoin="round" stroke-linecap="round"/>
<path d="M1195.1 276.3 L1201.7 284.6 L1219.6 286.1" fill="none" stroke="#e8997a" stroke-width="4.9" stroke-linejoin="round" stroke-linecap="round"/>
<path d="M1225.6 263.7 L1249.6 268.2 L1267.5 277.2 L1279.5 285.2" fill="none" stroke="#e8997a" stroke-width="4.9" stroke-linejoin="round" stroke-linecap="round"/>
<path d="M1228.6 263.7 L1233.1 275.7 L1240.6 287.6" fill="none" stroke="#e8997a" stroke-width="4.9" stroke-linejoin="round" stroke-linecap="round"/>
<path d="M1189.7 300.2 L1212.2 304.1 L1219.6 320.5 L1231.6 332.5 L1251.0 337.9" fill="none" stroke="#e8997a" stroke-width="4.9" stroke-linejoin="round" stroke-linecap="round"/>
<path d="M1212.2 304.1 L1231.6 301.1 L1240.6 314.6 L1249.6 332.5" fill="none" stroke="#e8997a" stroke-width="4.9" stroke-linejoin="round" stroke-linecap="round"/>
<path d="M1282.5 299.6 L1267.5 313.1 L1263.0 328.0 L1252.5 337.0" fill="none" stroke="#e8997a" stroke-width="4.9" stroke-linejoin="round" stroke-linecap="round"/>
<path d="M1240.6 296.6 L1261.5 299.6 L1273.5 302.6" fill="none" stroke="#e8997a" stroke-width="4.9" stroke-linejoin="round" stroke-linecap="round"/>
<path d="M1219.6 257.7 L1231.6 275.7 L1243.6 296.6 L1254.0 326.5 L1266.0 359.4 L1278.0 395.3" fill="none" stroke="#cf8262" stroke-width="15.5" stroke-linejoin="round"/>
<path d="M1219.6 257.7 L1231.6 275.7 L1243.6 296.6 L1254.0 326.5 L1266.0 359.4 L1278.0 395.3" fill="none" stroke="#e8997a" stroke-width="13.5" stroke-linejoin="round"/>
<path d="M790.0 394.0 L827.3 380.0 L936.5 339.2 L1000.0 313.2 L1032.8 301.4 L1064.0 295.3 L1100.0 294.3 L1295.0 294.3 L1600.0 223.0 L1610.0 220.5" fill="none" stroke="#cf8262" stroke-width="17.5" stroke-linejoin="round"/>
<path d="M790.0 394.0 L827.3 380.0 L936.5 339.2 L1000.0 313.2 L1032.8 301.4 L1064.0 295.3 L1100.0 294.3 L1295.0 294.3 L1600.0 223.0 L1610.0 220.5" fill="none" stroke="#e8997a" stroke-width="15.5" stroke-linejoin="round"/>

<text x="457.5" y="178.5" font-size="25" fill="#000" font-family="Liberation Sans,sans-serif" stroke="#fff" stroke-width="3.500" stroke-linejoin="round" paint-order="stroke" textLength="85" lengthAdjust="spacing" >owview</text>
<rect x="467.500" y="165" width="64.500" height="17.500" fill="#c2c2bc" style="mix-blend-mode:darken"/>
<text x="499.0" y="180.0" font-size="7" fill="#333" font-family="Liberation Sans,sans-serif" >s</text>
<text x="560.7" y="371.4" font-size="25" fill="#000" font-family="Liberation Sans,sans-serif" stroke="#fff" stroke-width="3.500" stroke-linejoin="round" paint-order="stroke" textLength="143" lengthAdjust="spacing" >Palm Spring</text>
<text x="596.6" y="401.4" font-size="25" fill="#000" font-family="Liberation Sans,sans-serif" stroke="#fff" stroke-width="3.500" stroke-linejoin="round" paint-order="stroke" textLength="72" lengthAdjust="spacing" >Manor</text>
<text x="1209.5" y="200.9" font-size="25" fill="#000" font-family="Liberation Sans,sans-serif" stroke="#fff" stroke-width="3.500" stroke-linejoin="round" paint-order="stroke" textLength="95.7" lengthAdjust="spacing" >Catalina</text>
<text x="1209.5" y="228.4" font-size="25" fill="#000" font-family="Liberation Sans,sans-serif" stroke="#fff" stroke-width="3.500" stroke-linejoin="round" paint-order="stroke" textLength="87" lengthAdjust="spacing" >Garden</text>
<text x="527.2" y="245.2" font-size="17.5" fill="#94948c" font-family="Liberation Sans,sans-serif" transform="rotate(81.4 527.2 245.2)" textLength="101" lengthAdjust="spacing" stroke="#f2efd0" stroke-width="2" stroke-linejoin="round" paint-order="stroke" font-weight="bold">Iron Hill Rd</text>
<text x="701.5" y="204.0" font-size="18" fill="#948c82" font-family="Liberation Sans,sans-serif" transform="rotate(82.8 701.5 204.0)" textLength="114" lengthAdjust="spacing" stroke="#f2efd0" stroke-width="2" stroke-linejoin="round" paint-order="stroke" font-weight="bold">S Chapel Rd</text>
<text x="1492.0" y="203.5" font-size="16.5" fill="#9a9a8a" font-family="Liberation Sans,sans-serif" transform="rotate(-15 1492.0 203.5)" textLength="90.5" lengthAdjust="spacing" stroke="#f2efd0" stroke-width="2" stroke-linejoin="round" paint-order="stroke" font-weight="bold">Dawson Dr</text>
<text x="1361.4" y="239.2" font-size="16.5" fill="#8e8e86" font-family="Liberation Sans,sans-serif" textLength="24" lengthAdjust="spacing" stroke="#f2efd0" stroke-width="2" stroke-linejoin="round" paint-order="stroke" font-weight="bold">Rd</text>
<text x="964.9" y="389.9" font-size="16.5" fill="#8e8e86" font-family="Liberation Sans,sans-serif" transform="rotate(-38 964.9 389.9)" textLength="24" lengthAdjust="spacing" stroke="#f2efd0" stroke-width="2" stroke-linejoin="round" paint-order="stroke" font-weight="bold">Rd</text>
<text x="1485.0" y="392.9" font-size="18" fill="#6e6e68" font-family="Liberation Sans,sans-serif" transform="rotate(-15.7 1485.0 392.9)" textLength="132" lengthAdjust="spacing" stroke="#f2efd0" stroke-width="2" stroke-linejoin="round" paint-order="stroke" font-weight="bold">Baltimore Pike</text>
<text x="1283.6" y="248.2" font-size="13" fill="#8e8e86" font-family="Liberation Sans,sans-serif" stroke="#f2efd0" stroke-width="2" stroke-linejoin="round" paint-order="stroke" font-weight="bold">B</text>
<text x="1222.0" y="172.5" font-size="16" fill="#9a9a8a" font-family="Liberation Sans,sans-serif" textLength="40" lengthAdjust="spacing" stroke="#f2efd0" stroke-width="2" stroke-linejoin="round" paint-order="stroke" font-weight="bold">Lujn</text>
<text x="1041.5" y="296.3" font-size="18" fill="#5e4c46" font-family="Liberation Sans,sans-serif" textLength="143.5" lengthAdjust="spacing" font-weight="bold">Delaware Tpke</text>
<text x="779.5" y="395.5" font-size="19" fill="#5e4c46" font-family="Liberation Sans,sans-serif" transform="rotate(-20.5 779.5 395.5)" textLength="121" lengthAdjust="spacing" font-weight="bold">laware Tpke</text>
<path id="tp2" d="M1272 297.500 L1292 297.500 Q1312 296.500 1335 291 L1480 257" fill="none"/>
<text font-size="18" fill="#5e4c46" font-family="Liberation Sans,sans-serif" font-weight="bold"><textPath href="#tp2" textLength="150" lengthAdjust="spacing">Delaware Tpke</textPath></text>
<path id="tp3" d="M1232.8 283.1 L1239.4 305.6 L1252.8 338.5 L1266.3 368.4 L1275.3 395.3" fill="none"/>
<text font-size="18" fill="#5e4c46" font-family="Liberation Sans,sans-serif" font-weight="bold"><textPath href="#tp3" textLength="128" lengthAdjust="spacing">S College Ave</textPath></text>
<path d="M1313.0 308.2 L1322.9 328.9 L1340.7 358.6 L1356.5 368.5 L1376.2 376.4 L1382.2 384.3" fill="none" stroke="#fbfbf6" stroke-width="2" />
<path d="M579.5 315.0 L580.5 289.9 L584.4 274.3 L592.2 254.8 L604.9 239.1 L624.4 223.5 L642.0 213.8 L653.7 212.8 L665.4 207.0 L661.5 202.1 L666.3 198.2 L669.3 204.0 L677.1 199.1 L686.8 192.3 L696.6 194.3 L701.5 196.2 L708.3 194.3 L716.1 186.5 L720.0 178.7 L727.8 170.9 L735.6 166.0 L744.4 166.0 L735.6 176.7 L725.9 190.4 L724.9 200.1 L716.1 204.0 L708.3 203.0 L703.4 204.0 L700.5 213.8 L699.5 221.6 L688.8 223.5 L689.8 229.4 L684.9 227.4 L682.0 234.3 L679.0 231.3 L669.3 237.2 L659.5 235.2 L651.7 233.3 L642.0 235.2 L632.2 242.1 L624.4 250.9 L618.5 260.6 L616.6 268.4 L611.7 280.1 L606.8 284.0 L604.9 291.8 L599.0 299.6 L597.1 305.5 L593.2 315.0 L596.0 335.5 L590.6 344.5 L580.7 348.1 L578.6 332.5 Z" fill="#0070ff"/>
<path d="M1164.3 165.0 L1166.4 181.5 L1174.8 193.4 L1183.2 204.5 L1181.4 209.9 L1189.7 209.3 L1200.2 220.3 L1209.2 228.4 L1221.1 233.2 L1233.1 243.4 L1249.6 251.7 L1264.5 261.3 L1279.5 269.7 L1291.4 278.7 L1300.4 284.6 L1309.1 303.2 L1306.1 307.2 L1307.1 321.0 L1300.2 325.0 L1304.1 336.8 L1303.1 342.8 L1313.0 356.6 L1324.9 366.5 L1336.7 368.5 L1332.8 365.5 L1340.7 366.5 L1356.5 372.4 L1368.3 376.4 L1376.2 382.3 L1382.2 390.2 L1356.5 390.2 L1348.6 387.2 L1332.8 382.3 L1322.9 376.4 L1309.1 364.5 L1297.2 350.7 L1289.3 334.9 L1286.3 323.0 L1282.4 306.2 L1294.4 296.6 L1285.4 284.6 L1267.5 272.7 L1249.6 263.7 L1231.6 257.7 L1219.6 263.7 L1201.7 260.7 L1189.7 254.7 L1180.8 245.8 L1168.8 238.3 L1161.3 232.3 L1153.8 236.8 L1144.9 239.8 L1152.3 232.3 L1158.3 224.8 L1150.8 215.8 L1141.9 203.9 L1138.9 194.9 L1128.4 182.9 L1117.9 174.0 L1106.0 165.0 Z" fill="#0070ff"/>
<path d="M1266.0 209.9 L1279.5 206.9 L1291.4 209.9 L1309.4 215.8 L1327.3 212.9 L1336.3 203.9 L1339.3 208.4 L1348.3 212.9 L1354.2 224.8 L1361.7 236.8 L1357.2 247.3 L1348.3 251.7 L1354.2 257.7 L1351.2 263.7 L1339.3 263.7 L1345.3 268.2 L1339.3 270.3 L1321.3 268.8 L1315.4 254.7 L1306.4 253.2 L1300.4 257.7 L1306.4 266.7 L1309.4 278.7 L1291.4 280.2 L1270.5 269.7 L1269.0 260.7 L1279.5 254.7 L1286.9 245.8 L1285.4 233.8 L1283.9 218.8 L1275.0 214.4 Z" fill="#0070ff" />
<path d="M1129.9 163.5 L1153.8 163.5 L1167.3 193.4 L1183.7 221.8 L1200.2 246.4 L1198.7 251.7 L1174.8 229.3 L1155.3 197.9 Z" fill="#bed2ff" />
<path d="M1141.9 163.5 L1159.8 194.9 L1177.8 224.8 L1198.7 248.7 L1225.6 254.7 L1249.6 260.7 L1273.5 275.7 L1291.4 287.6 L1297.2 305.2 L1298.2 323.0 L1295.2 332.9 L1301.1 346.7 L1313.0 360.6 L1328.8 372.4 L1348.6 380.3 L1368.3 385.3 L1380.2 389.4" fill="none" stroke="#bed2ff" stroke-width="3.4" stroke-linejoin="round"/>
<path d="M1295.2 332.9 L1301.1 346.7 L1313.0 360.6 L1328.8 372.4 L1348.6 380.3 L1368.3 385.3 L1380.2 389.4" fill="none" stroke="#bed2ff" stroke-width="5.5" stroke-linejoin="round"/>
<path d="M1141.9 163.5 L1159.8 194.9 L1177.8 224.8 L1198.7 248.7 L1225.6 254.7 L1249.6 260.7 L1273.5 275.7 L1291.4 287.6 L1297.2 305.2 L1298.2 323.0 L1295.2 332.9" fill="none" stroke="#0070ff" stroke-width="0.9" stroke-linejoin="round"/>
<path d="M1282.5 165.0 L1286.9 200.9 L1294.4 239.8 L1281.0 268.2 L1272.0 270.3" fill="none" stroke="#5aa5ff" stroke-width="2.1" stroke-linejoin="round"/>
<path d="M1300.2 325.0 L1317.0 334.9 L1332.8 354.6 L1348.6 366.5 L1376.2 374.4 L1384.2 378.3" fill="none" stroke="#73b2ff" stroke-width="1.8" />
<path d="M735.6 165.0 L722.0 182.6 L721.0 196.2 L714.1 203.0 L694.6 205.0 L677.1 217.7 L643.9 224.5 L626.3 245.0 L608.8 252.8 L602.0 258.7 L595.1 286.0 L587.3 315.0 L581.6 326.5 L574.1 341.5 L553.2 357.9 L518.8 365.4 L494.9 353.4 L467.9 326.5 L451.5 320.5" fill="none" stroke="#73b2ff" stroke-width="2.1" stroke-linejoin="round"/>
<path d="M553.2 357.9 L562.2 371.4 L567.2 381.9 L568.4 390.8" fill="none" stroke="#4a9aff" stroke-width="1.8" stroke-dasharray="6 2"/>
<path d="M849.2 390.8 L852.2 360.9 L868.6 348.9" fill="none" stroke="#1a78ff" stroke-width="2.2" />
<circle cx="869.2" cy="348.1" r="2.200" fill="#0a5ae0"/>
<path d="M1495.4 305.6 L1519.4 302.6 L1543.3 301.1 L1552.3 314.6 L1561.2 328.0 L1579.2 330.1 L1601.6 328.9" fill="none" stroke="#73b2ff" stroke-width="2" stroke-linejoin="round"/>
<path d="M1384.2 378.3 L1380.2 372.4 L1392.1 356.6 L1401.9 338.8 L1404.9 332.9 L1401.9 329.9 L1398.0 342.8 L1388.1 360.6 L1380.2 372.4" fill="none" stroke="#73b2ff" stroke-width="1.5" />
<path d="M1384.2 378.3 L1385.1 390.2" fill="none" stroke="#73b2ff" stroke-width="1.5" />

<path d="M569.6 163.5 L574.1 262.2 L656.4 163.5" fill="none" stroke="#a83a02" stroke-width="4.7" stroke-linejoin="miter"/>
<path d="M689.3 163.5 L695.9 177.0 L698.9 194.9 L726.7 163.5" fill="none" stroke="#a83a02" stroke-width="4.7" stroke-linejoin="miter"/>
<path d="M886.6 165.0 L889.6 172.5 L922.5 167.4" fill="none" stroke="#a83a02" stroke-width="4.7" stroke-linejoin="miter"/>
<path d="M968.8 166.5 L973.3 171.0 L1010.7 167.4 L1012.8 194.9 L1003.2 196.4 L1010.7 263.7 L925.4 271.2 L929.9 311.6 L938.9 319.0 L955.4 314.6 L962.8 341.5 L989.8 326.5 L994.2 354.9 L1040.0 302.6" fill="none" stroke="#a83a02" stroke-width="4.7" stroke-linejoin="miter"/>
<path d="M967.3 337.0 L987.7 368.4" fill="none" stroke="#a83a02" stroke-width="6.5" stroke-linejoin="miter"/>
<path d="M953.0 350.4 L971.8 344.5" fill="none" stroke="#a83a02" stroke-width="6" stroke-linejoin="miter"/>
<path d="M1040.0 320.5 L1018.2 344.5 L1021.2 360.0 L1040.0 360.9" fill="none" stroke="#a83a02" stroke-width="4.7" stroke-linejoin="miter"/>
<path d="M1137.7 200.9 L1109.3 203.9 L1119.7 229.3 L1077.9 254.7 L1074.9 250.2 L1067.4 253.2 L1070.4 260.7 L1042.0 277.2 L1036.0 284.6 L1042.0 305.6 L1061.4 307.1 L1064.4 357.9 L1028.5 360.9" fill="none" stroke="#a83a02" stroke-width="4.7" stroke-linejoin="miter"/>
<path d="M1028.5 314.6 L1034.5 314.6 L1045.0 311.6 L1047.9 320.5 L1039.0 328.0 L1028.5 328.0" fill="none" stroke="#a83a02" stroke-width="4.7" stroke-linejoin="miter"/>
<path d="M1191.5 166.5 L1209.5 180.0 L1224.4 177.0 L1240.9 202.4 L1266.3 184.4 L1267.8 165.0" fill="none" stroke="#a83a02" stroke-width="4.7" stroke-linejoin="miter"/>
<path d="M1336.3 165.0 L1339.3 178.5 L1400.0 174.0" fill="none" stroke="#a83a02" stroke-width="4.7" stroke-linejoin="miter"/>
<path d="M1336.9 165.0 L1338.4 180.0 L1390.8 175.5 L1392.3 169.5 L1414.7 171.0 L1435.6 169.5 L1454.2 247.3 L1408.7 256.2 L1369.2 269.7 L1306.4 280.2 L1291.5 277.2" fill="none" stroke="#a83a02" stroke-width="4.7" stroke-linejoin="miter"/>

<rect x="1415.500" y="165" width="190" height="16" fill="#a8a8a0" opacity="0.620"/>
<path d="M1426.300 166 V178.900 H1602 M1495.400 166 V178.900 M1564.800 166 V178.900" fill="none" stroke="#000" stroke-width="2"/>
<text x="869.6" y="344.6" font-size="20" fill="#1a78ff" font-family="DejaVu Sans,sans-serif" transform="rotate(-42.6 869.6 344.6)" textLength="110" lengthAdjust="spacing">Muddy Run</text>

<path d="M454 166 V390 H1600" fill="none" stroke="#000" stroke-width="2"/>
</svg>

<div class="a" style="left:453.500px;top:404px;width:1048.500px;height:197px;border:1px solid #b4b4b4"></div>
<div class="a" style="left:451.5px;top:402px;width:5px;height:5px;background:#333;border:1px solid #444"></div>
<div class="a" style="left:975px;top:402px;width:5px;height:5px;background:#fff;border:1px solid #444"></div>
<div class="a" style="left:1499.5px;top:402px;width:5px;height:5px;background:#fff;border:1px solid #444"></div>
<div class="a" style="left:451.5px;top:500.5px;width:5px;height:5px;background:#fff;border:1px solid #444"></div>
<div class="a" style="left:1499.5px;top:500.5px;width:5px;height:5px;background:#fff;border:1px solid #444"></div>
<div class="a" style="left:451.5px;top:598.5px;width:5px;height:5px;background:#fff;border:1px solid #444"></div>
<div class="a" style="left:975px;top:598.5px;width:5px;height:5px;background:#fff;border:1px solid #444"></div>
<div class="a" style="left:1499.5px;top:598.5px;width:5px;height:5px;background:#fff;border:1px solid #444"></div>
<div class="a" style="left:453.500px;top:406.500px;width:32px;height:17.500px;border:3.500px solid #a83a02;border-radius:1.500px;background:#fff"></div>
<div class="t" style="left:497.8px;top:407.7px;font-family:'DejaVu Sans Condensed','DejaVu Sans',sans-serif;font-size:18.1px;color:#000;">City of Newark</div>
<div class="t" style="left:452.9px;top:437.3px;font-family:'DejaVu Sans Condensed','DejaVu Sans',sans-serif;font-size:18.1px;color:#000;">Surface Water</div>
<div class="a" style="left:465px;top:466.300px;width:32px;height:2px;background:#0070ff"></div>
<div class="t" style="left:508.6px;top:461.6px;font-family:'DejaVu Sans Condensed','DejaVu Sans',sans-serif;font-size:13.5px;color:#000;">Rivers</div>
<div class="a" style="left:465px;top:491.800px;width:32px;height:1.800px;background:#73b2ff"></div>
<div class="t" style="left:508.6px;top:487.0px;font-family:'DejaVu Sans Condensed','DejaVu Sans',sans-serif;font-size:13.5px;color:#000;">Streams</div>
<svg class="a" style="left:465px;top:509px" width="33" height="18" viewBox="0 0 33 18"><g stroke="#0070ff" stroke-width="1.600"><path d="M12 1.500 H17 M19 1.500 H23 M25 1.500 H31" stroke-dasharray="2.500 1.200"/><path d="M1 9 L3 10 M5 14 L7 16 M9 13 L10.500 15.500 M14 10 V16 M19 13 V16 M24 14 L25.500 11 M28 15 L30 13 M1 1.500 H2.500 M22 16 L23 14"/></g></svg>
<div class="t" style="left:508.6px;top:512.4px;font-family:'DejaVu Sans Condensed','DejaVu Sans',sans-serif;font-size:13.5px;color:#000;">Marsh</div>
<div class="a" style="left:465px;top:539px;width:32px;height:18.500px;background:#004da8"></div>
<div class="t" style="left:508.6px;top:542.6px;font-family:'DejaVu Sans Condensed','DejaVu Sans',sans-serif;font-size:13.5px;color:#000;">Bodies of Water</div>
<div class="t" style="left:708.7px;top:407.7px;font-family:'DejaVu Sans Condensed','DejaVu Sans',sans-serif;font-size:18.1px;color:#000;">Outdoor Resource Inventory</div>
<div class="a" style="left:721px;top:429px;width:34px;height:34px;background:#f5e6fc"></div>
<div class="a" style="left:721px;top:470.8px;width:34px;height:34px;background:#a966cc"></div>
<div class="a" style="left:721px;top:512.2px;width:34px;height:34px;background:#4ce600"></div>
<svg class="a" style="left:721px;top:554px" width="34" height="35" viewBox="0 0 34 35"><defs><pattern id="ld" width="8" height="8" patternUnits="userSpaceOnUse"><circle cx="2" cy="2" r="1" fill="#4ce600"/><circle cx="6" cy="6" r="1" fill="#4ce600"/></pattern></defs><rect x="0.500" y="0.500" width="33" height="34" fill="#f6fbe8"/><rect x="0.500" y="0.500" width="33" height="34" fill="url(#ld)" stroke="#4ec42a" stroke-width="1"/></svg>
<div class="t" style="left:766.9px;top:439.9px;font-family:'DejaVu Sans Condensed','DejaVu Sans',sans-serif;font-size:13.5px;color:#000;">Natural Areas</div>
<div class="t" style="left:766.9px;top:481.9px;font-family:'DejaVu Sans Condensed','DejaVu Sans',sans-serif;font-size:13.5px;color:#000;">Nature Preserves</div>
<div class="t" style="left:766.9px;top:523.8px;font-family:'DejaVu Sans Condensed','DejaVu Sans',sans-serif;font-size:13.5px;color:#000;">Public Protected Lands</div>
<div class="t" style="left:766.9px;top:565.2px;font-family:'DejaVu Sans Condensed','DejaVu Sans',sans-serif;font-size:13.5px;color:#000;">Conservation Easements</div>
<div class="t" style="left:967.6px;top:407.5px;font-family:'DejaVu Sans Condensed','DejaVu Sans',sans-serif;font-size:18.1px;color:#000;">FEMA Floodplains</div>
<div class="a" style="left:979.600px;top:439.1px;width:30.700px;height:16.600px;background:#bed2ff"></div>
<div class="a" style="left:979.600px;top:464.9px;width:30.700px;height:16.600px;background:#0070ff"></div>
<div class="a" style="left:979.600px;top:498.1px;width:30.700px;height:16.600px;background:#0070ff"></div>
<div class="t" style="left:1022.7px;top:441.1px;font-family:'DejaVu Sans Condensed','DejaVu Sans',sans-serif;font-size:13.5px;color:#000;">Floodway</div>
<div class="t" style="left:1022.7px;top:459.5px;font-family:'DejaVu Sans Condensed','DejaVu Sans',sans-serif;font-size:13.5px;color:#000;">1% Annual Chance Floodplain</div>
<div class="t" style="left:1022.7px;top:475.9px;font-family:'DejaVu Sans Condensed','DejaVu Sans',sans-serif;font-size:13.5px;color:#000;">Areas</div>
<div class="t" style="left:1022.7px;top:493.0px;font-family:'DejaVu Sans Condensed','DejaVu Sans',sans-serif;font-size:13.5px;color:#000;">0.2% Annual Chance Floodplain</div>
<div class="t" style="left:1022.7px;top:509.6px;font-family:'DejaVu Sans Condensed','DejaVu Sans',sans-serif;font-size:13.5px;color:#000;">Areas</div>

<div class="a" style="left:1600px;top:167px;width:17px;height:530px;background:#2b2b2b"></div>
<svg class="a" style="left:1604.500px;top:173px" width="9" height="6" viewBox="0 0 9 6"><path d="M1 5 L4.500 1.500 L8 5" fill="none" stroke="#c0c0c0" stroke-width="1.100"/></svg>
<svg class="a" style="left:1604.500px;top:685px" width="9" height="6" viewBox="0 0 9 6"><path d="M1 1 L4.500 4.500 L8 1" fill="none" stroke="#c0c0c0" stroke-width="1.100"/></svg>
<div class="a" style="left:1604.500px;top:531px;width:8.500px;height:106px;background:#5e5e5e;border-radius:4.500px"></div>
<div class="a" style="left:312px;top:697px;width:1288px;height:16px;background:#2b2b2b"></div>
<div class="a" style="left:1600px;top:697px;width:17px;height:16px;background:#333"></div>
<svg class="a" style="left:317px;top:700px" width="7" height="10" viewBox="0 0 7 10"><path d="M5.500 1 L1.500 5 L5.500 9" fill="none" stroke="#c0c0c0" stroke-width="1.200"/></svg>
<svg class="a" style="left:1588px;top:700px" width="7" height="10" viewBox="0 0 7 10"><path d="M1.500 1 L5.500 5 L1.500 9" fill="none" stroke="#c0c0c0" stroke-width="1.200"/></svg>
<div class="a" style="left:572px;top:700.500px;width:597px;height:8.500px;background:#5e5e5e;border-radius:4.500px"></div>
<div class="a combo" style="left:317px;top:714px;width:100px;height:22px;border-color:#484848"></div>
<div class="t" style="left:323px;top:720.500px;font-size:11.500px;color:#e0e0e0">1:36,000</div>
<div class="a" style="left:407px;top:724px;border:3px solid transparent;border-top:3.500px solid #bdbdbd;border-bottom:0"></div>
<div class="a" style="left:421px;top:717px;width:1px;height:16px;background:#9a9a9a"></div>
<div class="a" style="left:431px;top:714px;width:53px;height:22px;background:#212121"></div>
<div class="t" style="left:437.500px;top:720.500px;font-size:11.500px;color:#e0e0e0">174%</div>
<div class="a" style="left:474.500px;top:724px;border:3px solid transparent;border-top:3.500px solid #bdbdbd;border-bottom:0"></div>
<div class="a" style="left:488px;top:717px;width:1px;height:16px;background:#9a9a9a"></div>
<div class="a" style="left:493.500px;top:714.500px;width:20.500px;height:20px;background:#1565b8"></div>
<svg class="a" style="left:495px;top:716px" width="18" height="17" viewBox="0 0 18 17"><path d="M1.500 1.500 H11.500 V10.500 H1.500 Z M6.500 1.500 V10.500 M1.500 6 H11.500" fill="none" stroke="#9fb4c8" stroke-width="0.900"/><rect x="6.500" y="6" width="5.500" height="5" fill="#1565b8"/><path d="M12.500 9 V15.500 M9.300 12.200 H15.700" stroke="#e6e6e6" stroke-width="1.100"/></svg>
<div class="a" style="left:519.500px;top:717px;width:1px;height:16px;background:#9a9a9a"></div>
<div class="t" style="left:925px;top:720.500px;font-size:11.500px;color:#d0d0d0">-0.592 , 0.717</div>
<div class="a" style="left:1404px;top:715px;width:134px;height:19.500px;background:#262626"></div>
<svg class="a" style="left:1406px;top:716px" width="19" height="19" viewBox="0 0 19 19"><rect x="7" y="1" width="10" height="10" fill="#8a9298" stroke="#b8b8b8" stroke-width="0.600"/><path d="M9 2 L12 9 M15 3 L12 9" stroke="#2fa8e8" stroke-width="1.500" fill="none"/><circle cx="6" cy="10.500" r="3.800" fill="#262626" stroke="#3a9be0" stroke-width="1.200"/><path d="M4 10.500 H8 M6 8.500 V12.500" stroke="#c8c8c8" stroke-width="0.900"/><path d="M8.800 13.500 L12.500 17.500" stroke="#c9802a" stroke-width="1.600"/></svg>
<div class="t" style="left:1427px;top:720px;font-size:11.600px;color:#e0e0e0">Selected Elements: 1</div>
<div class="a" style="left:1543px;top:717px;width:1px;height:16px;background:#9a9a9a"></div>
<div class="a" style="left:1551px;top:718px;width:4.500px;height:14px;background:#b0b0b0"></div><div class="a" style="left:1558.500px;top:718px;width:4.500px;height:14px;background:#b0b0b0"></div>
<div class="a" style="left:1571px;top:717px;width:1px;height:16px;background:#9a9a9a"></div>
<svg class="a" style="left:1578px;top:716px" width="18" height="18" viewBox="0 0 18 18"><path d="M3 8 A6 6 0 0 1 14 5" fill="none" stroke="#2f9bea" stroke-width="2.400"/><path d="M16.500 1.500 V7.500 H10.500 Z" fill="#2f9bea"/><path d="M15 10 A6 6 0 0 1 4 13" fill="none" stroke="#2f9bea" stroke-width="2.400"/><path d="M1.500 16.500 V10.500 H7.500 Z" fill="#2f9bea"/></svg>
<div class="a" style="left:291px;top:744.500px;width:172px;height:21.500px;background:#46546a"></div>
<div class="a" style="left:291px;top:766px;width:1327px;height:3px;background:#4a4a52"></div>
<svg class="a" style="left:297px;top:749px" width="16" height="13" viewBox="0 0 16 13"><rect x="0.500" y="0.500" width="15" height="12" fill="#2b2b2b" stroke="#c8c8c8"/><rect x="1" y="1" width="14" height="2.500" fill="#3a9be0"/><path d="M1 6.500 H15 M1 9.500 H15 M4.500 3.500 V12 M8 3.500 V12 M11.500 3.500 V12" stroke="#c8c8c8" stroke-width="0.800"/></svg>
<div class="t" style="left:318px;top:751.500px;font-size:11.700px;color:#f0f0f0">Road and Rail Network</div>
<svg class="a" style="left:448px;top:751px" width="9" height="9" viewBox="0 0 9 9"><path d="M0.800 0.800 L8.200 8.200 M8.200 0.800 L0.800 8.200" stroke="#e6e6e6" stroke-width="1.200"/></svg>
<div class="a" style="left:1606px;top:755px;border:4px solid transparent;border-top:4.500px solid #c4c4c4;border-bottom:0"></div>
<!--VIEW-->
<div class="a panel" style="left:1625px;top:122px;width:294px;height:647px"></div>
<div class="a pbar" style="left:1625px;top:122px;width:294px"></div>
<div class="t ptitle" style="left:1631px;top:131px">Format Legend Item</div>
<div class="a" style="left:1873px;top:135px;border:4px solid transparent;border-top:4.500px solid #c4c4c4;border-bottom:0"></div>
<svg class="a" style="left:1887px;top:130px" width="10" height="12" viewBox="0 0 10 12"><path d="M2.500 1 H7.500 M3.300 1 V6.500 M6.700 1 V6.500 M6 1 V6.500 M1 6.700 H9 M5 7 V11" stroke="#c4c4c4" stroke-width="1.100" fill="none"/></svg>
<svg class="a" style="left:1903px;top:131px" width="10" height="10" viewBox="0 0 10 10"><path d="M1 1 L9 9 M9 1 L1 9" stroke="#d0d0d0" stroke-width="1.300"/></svg>
<svg class="a" style="left:1630px;top:164px" width="20" height="20" viewBox="0 0 20 20"><circle cx="10" cy="10" r="8.700" fill="none" stroke="#c8c8c8" stroke-width="1.100"/><path d="M14.500 10 H5.500 M9.300 6 L5.300 10 L9.300 14" fill="none" stroke="#c8c8c8" stroke-width="1.400"/></svg>
<div class="t" style="left:1730px;top:163px;font-size:15px;color:#dedede">Natural Areas</div>
<div class="t" style="left:1632px;top:195px;font-size:12.800px;font-weight:bold;color:#ececec">Legend Item</div>
<div class="a" style="left:1632px;top:209px;width:75px;height:2.500px;background:#2b8be6"></div>
<div class="a" style="left:1724px;top:201px;border:3.500px solid transparent;border-top:4px solid #d0d0d0;border-bottom:0"></div>
<div class="t" style="left:1748px;top:195px;font-size:12.700px;color:#d6d6d6">Text Symbol</div>
<svg class="a" style="left:1637px;top:234.5px" width="8" height="6" viewBox="0 0 8 6"><path d="M0.800 1 L4 4.500 L7.200 1" fill="none" stroke="#c8c8c8" stroke-width="1.300"/></svg>
<div class="t" style="left:1649.500px;top:231.5px;font-size:12.500px;font-weight:bold;color:#ececec">Show</div>
<div class="a cb on" style="left:1651.5px;top:251.0px;width:14px;height:14px;margin:-1.500px 0 0 -0.500px"></div>
<div class="t" style="left:1669.500px;top:252.5px;font-size:11.800px;color:#d9d9d9">Group layer name</div>
<div class="a cb" style="left:1651.5px;top:273.5px;width:14px;height:14px;margin:-1.500px 0 0 -0.500px"></div>
<div class="t" style="left:1669.500px;top:275px;font-size:11.800px;color:#d9d9d9">Layer name</div>
<div class="a cb on dis" style="left:1651.5px;top:296.0px;width:14px;height:14px;margin:-1.500px 0 0 -0.500px"></div>
<div class="t" style="left:1669.500px;top:297.5px;font-size:11.800px;color:#8c8c8c">Headings</div>
<div class="a cb on" style="left:1651.5px;top:318.5px;width:14px;height:14px;margin:-1.500px 0 0 -0.500px"></div>
<div class="t" style="left:1669.500px;top:320px;font-size:11.800px;color:#d9d9d9">Label (or layer name)</div>
<div class="a cb on dis" style="left:1651.5px;top:341.0px;width:14px;height:14px;margin:-1.500px 0 0 -0.500px"></div>
<div class="t" style="left:1669.500px;top:342.5px;font-size:11.800px;color:#8c8c8c">Descriptions</div>
<svg class="a" style="left:1637px;top:375.0px" width="8" height="6" viewBox="0 0 8 6"><path d="M0.800 1 L4 4.500 L7.200 1" fill="none" stroke="#c8c8c8" stroke-width="1.300"/></svg>
<div class="t" style="left:1649.500px;top:372px;font-size:12.500px;font-weight:bold;color:#ececec">Arrangement</div>
<div class="a combo" style="left:1650.500px;top:389px;width:154.500px;height:21.500px;border-color:#444"></div>
<div class="t" style="left:1655px;top:395px;font-size:11.600px;color:#e0e0e0">Patch | Label | Description</div>
<div class="a" style="left:1795px;top:398px;border:2.500px solid transparent;border-top:3px solid #b0b0b0;border-bottom:0"></div>
<div class="a cb on" style="left:1651.5px;top:425.5px;width:14px;height:14px;margin:-1.500px 0 0 -0.500px"></div>
<div class="t" style="left:1669.500px;top:427px;font-size:11.800px;color:#d9d9d9">Keep in single column</div>
<svg class="a" style="left:1637px;top:459.0px" width="8" height="6" viewBox="0 0 8 6"><path d="M0.800 1 L4 4.500 L7.200 1" fill="none" stroke="#c8c8c8" stroke-width="1.300"/></svg>
<div class="t" style="left:1649.500px;top:456px;font-size:12.500px;font-weight:bold;color:#ececec">Sizing</div>
<div class="t" style="left:1651px;top:479.5px;font-size:11.800px;color:#d9d9d9">Patch width</div>
<div class="a combo" style="left:1723.500px;top:473.5px;width:99px;height:22px;border-color:#4a4a4a"></div>
<div class="t" style="left:1740px;top:479.5px;width:64px;text-align:right;font-size:11.800px;color:#e0e0e0">14 pt</div>
<div class="a" style="left:1810.500px;top:478.5px;border:3.500px solid transparent;border-bottom:4px solid #c8c8c8;border-top:0"></div>
<div class="a" style="left:1810.500px;top:486.5px;border:3.500px solid transparent;border-top:4px solid #c8c8c8;border-bottom:0"></div>
<div class="t" style="left:1651px;top:507.5px;font-size:11.800px;color:#d9d9d9">Patch height</div>
<div class="a combo" style="left:1723.500px;top:501.5px;width:99px;height:22px;border-color:#4a4a4a"></div>
<div class="t" style="left:1740px;top:507.5px;width:64px;text-align:right;font-size:11.800px;color:#e0e0e0">8 pt</div>
<div class="a" style="left:1810.500px;top:506.5px;border:3.500px solid transparent;border-bottom:4px solid #c8c8c8;border-top:0"></div>
<div class="a" style="left:1810.500px;top:514.5px;border:3.500px solid transparent;border-top:4px solid #c8c8c8;border-bottom:0"></div>
<svg class="a" style="left:1637px;top:549.5px" width="8" height="6" viewBox="0 0 8 6"><path d="M0.800 1 L4 4.500 L7.200 1" fill="none" stroke="#c8c8c8" stroke-width="1.300"/></svg>
<div class="t" style="left:1649.500px;top:546.5px;font-size:12.500px;font-weight:bold;color:#ececec">Feature Display Options</div>
<div class="a" style="left:1649px;top:560px;width:248.500px;height:24px;overflow:hidden"><div class="t" style="left:20.500px;top:7px;font-size:11.800px;color:#d9d9d9">Only show features visible in the map extent</div></div>
<div class="a cb" style="left:1651.500px;top:565.500px;width:14px;height:14px;margin:-1.500px 0 0 -0.500px"></div>
<svg class="a" style="left:1637px;top:623.0px" width="6" height="8" viewBox="0 0 6 8"><path d="M1 0.800 L4.500 4 L1 7.200" fill="none" stroke="#c8c8c8" stroke-width="1.300"/></svg>
<div class="t" style="left:1649.500px;top:621px;font-size:12.500px;font-weight:bold;color:#ececec">Indents</div>
<!--RIGHT-->
<svg class="a" style="left:0;top:0;pointer-events:none" width="1925" height="769" viewBox="0 0 1925 769"><g fill="none" stroke="#f05a0a" stroke-width="2" stroke-linecap="round" stroke-linejoin="round">
<path stroke-width="2.500" d="M1.3 406.3 C3.1 407.2 8.2 410.0 12.0 412.0 C15.8 414.0 20.2 416.2 24.0 418.5 C27.8 420.8 32.8 424.6 34.5 425.8"/>
<path d="M688.5 403.9 C691.7 404.2 699.9 404.4 707.7 405.7 C715.5 406.9 727.4 409.0 735.5 411.6 C743.6 414.2 750.3 417.1 756.4 421.3 C762.5 425.6 769.3 430.6 772.1 437.0 C774.9 443.4 773.4 450.0 773.1 459.6 C772.8 469.2 770.2 482.8 770.3 494.4 C770.5 506.0 772.5 517.6 773.8 529.2 C775.1 540.8 777.4 554.2 778.0 564.0 C778.6 573.9 778.9 581.3 777.3 588.4 C775.7 595.5 772.4 602.3 768.6 606.5 C764.8 610.7 759.6 613.0 754.7 613.5 C749.7 613.9 745.1 611.4 739.0 609.3 C732.9 607.1 723.8 604.1 718.1 600.6 C712.4 597.1 707.4 597.4 704.9 588.4 C702.4 579.4 703.6 562.3 703.2 546.6 C702.7 531.0 702.6 511.8 702.1 494.4 C701.6 477.0 701.1 456.8 700.0 442.2 C699.0 427.6 696.5 412.6 695.8 406.7"/>
<path d="M1060.1 481.1 C1063.6 480.9 1074.8 480.5 1081.3 479.7 C1087.8 479.0 1092.5 478.1 1099.0 476.5 C1105.4 475.0 1114.3 472.3 1120.1 470.5 C1126.0 468.8 1131.9 466.7 1134.3 465.9"/>
<path d="M1059.4 518.2 C1063.0 518.5 1074.7 519.3 1081.3 519.6 C1087.9 519.9 1093.1 520.0 1099.0 520.0 C1104.8 519.9 1111.3 519.8 1116.6 519.3 C1121.9 518.8 1126.6 518.1 1130.7 517.2 C1134.9 516.2 1139.6 514.2 1141.3 513.6"/>
<path d="M1683.8 442.8 C1687.4 442.5 1697.4 441.3 1705.6 441.5 C1713.8 441.6 1723.8 442.2 1732.9 443.7 C1742.0 445.1 1750.2 447.5 1760.2 450.0 C1770.2 452.6 1782.4 455.9 1793.0 459.1 C1803.6 462.3 1814.2 465.0 1823.9 469.1 C1833.6 473.2 1843.6 478.2 1851.2 483.7 C1858.8 489.2 1865.5 496.1 1869.4 501.9 C1873.4 507.7 1874.6 513.1 1874.9 518.3 C1875.2 523.4 1874.6 528.9 1871.2 532.9 C1867.9 536.8 1862.8 539.8 1854.9 542.0 C1847.0 544.1 1839.7 545.0 1823.9 545.6 C1808.1 546.2 1783.0 545.9 1760.2 545.6 C1737.5 545.3 1708.6 545.0 1687.4 543.8 C1666.2 542.6 1648.0 540.7 1632.8 538.3 C1617.6 535.9 1604.6 534.4 1596.4 529.2 C1588.2 524.1 1587.2 515.3 1583.7 507.4 C1580.2 499.5 1576.4 488.6 1575.5 481.9 C1574.6 475.2 1574.7 471.6 1578.2 467.3 C1581.7 463.1 1589.7 459.0 1596.4 456.4 C1603.1 453.8 1606.1 452.8 1618.2 451.9 C1630.4 450.9 1651.6 450.9 1669.2 450.9 C1686.8 450.9 1708.6 451.2 1723.8 451.9 C1739.0 452.5 1749.6 453.5 1760.2 454.6 C1770.8 455.6 1783.0 457.6 1787.5 458.2"/>
</g></svg>

</body>
</html>
